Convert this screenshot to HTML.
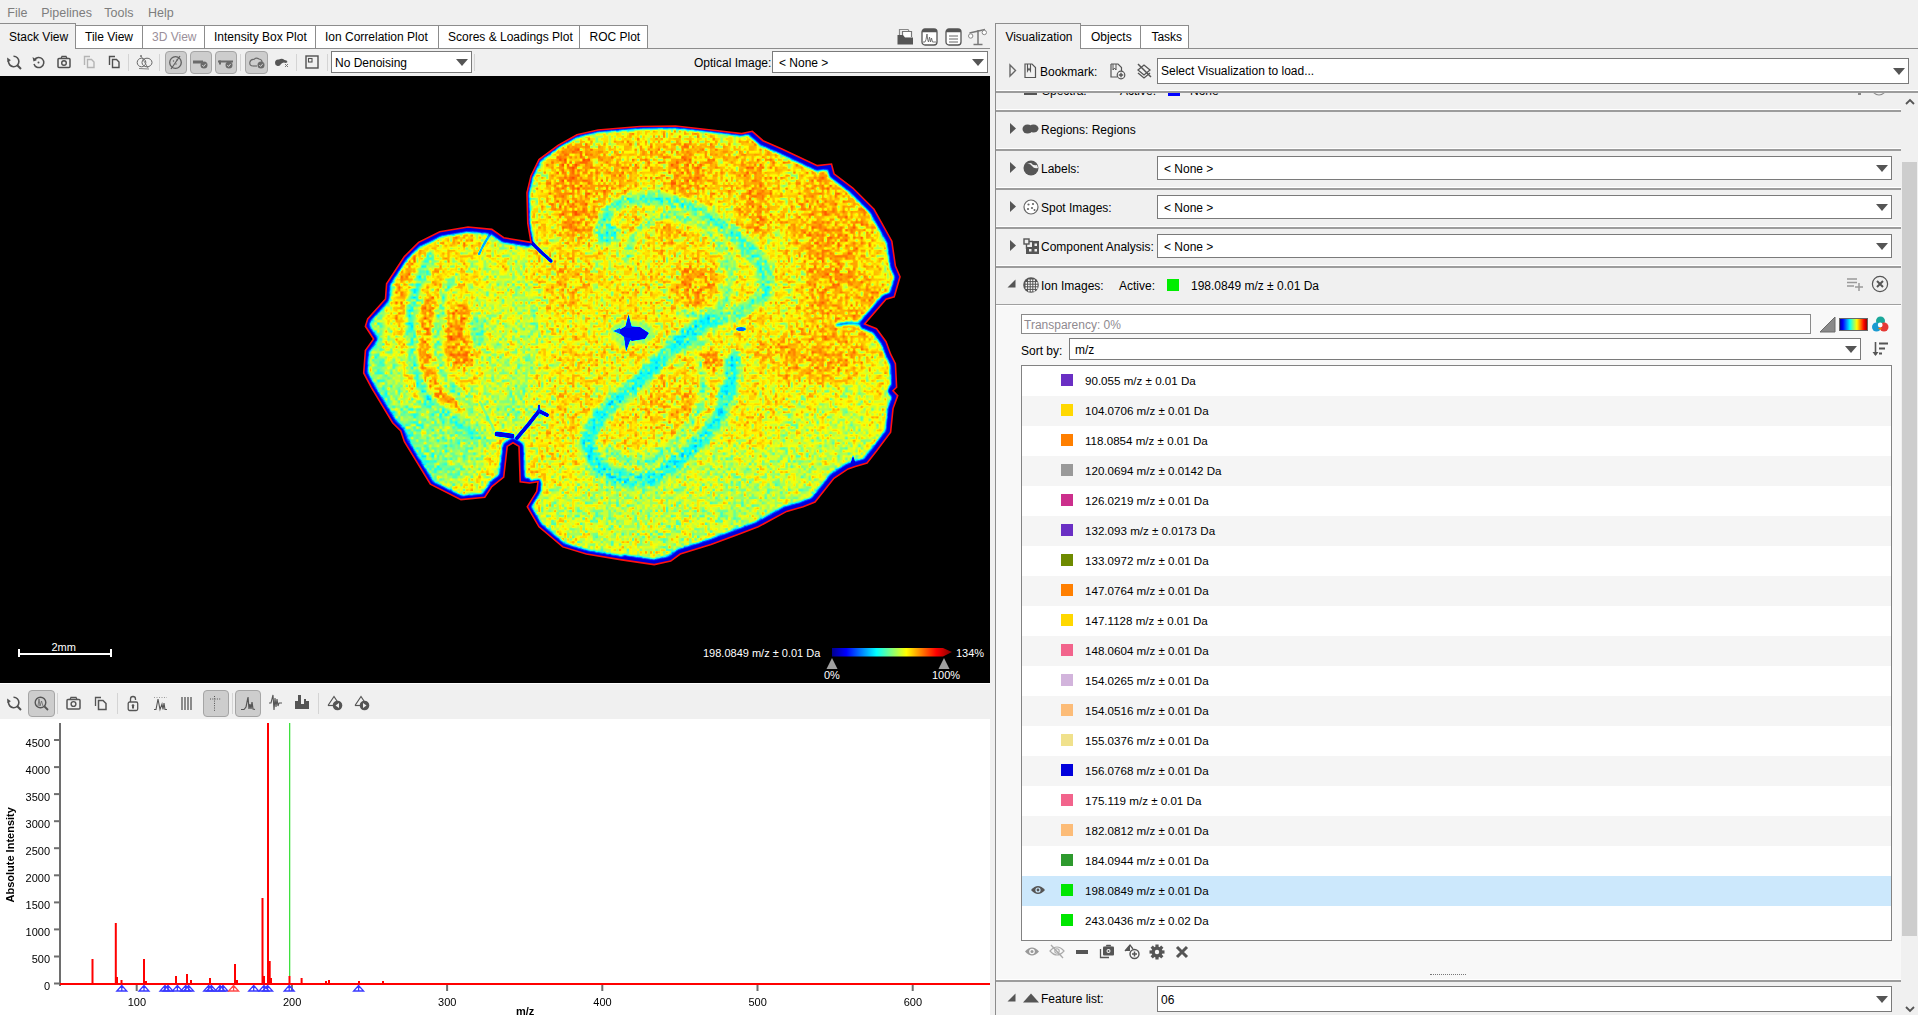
<!DOCTYPE html>
<html><head><meta charset="utf-8"><title>UI</title>
<style>
*{margin:0;padding:0;box-sizing:border-box}
html,body{width:1918px;height:1015px;overflow:hidden;background:#f0f0f0;font-family:"Liberation Sans",sans-serif;font-size:12px;color:#000}
.a{position:absolute}
.t{position:absolute;white-space:nowrap;line-height:1}
.tab{position:absolute;border:1px solid #8c8c8c;border-bottom:none;background:#fff}
.tabsel{background:#f0f0f0}
.combo{position:absolute;background:#fff;border:1px solid #7a7a7a}
.arr{position:absolute;width:0;height:0;border-left:6px solid transparent;border-right:6px solid transparent;border-top:7px solid #555}
.btnp{position:absolute;background:#cdcdcd;border:1px solid #a5a5a5;border-radius:4px}
.vsep{position:absolute;width:1px;background:#d6d6d6}
.sep{position:absolute;height:3px;border-top:1px solid #fff;background:#9c9c9c}
svg{position:absolute;overflow:visible}

</style></head><body>
<div class="t" style="left:7.30px;top:7.42px;font-size:12.5px;color:#7d7d7d;">File</div>
<div class="t" style="left:41.20px;top:7.42px;font-size:12.5px;color:#7d7d7d;">Pipelines</div>
<div class="t" style="left:104.30px;top:7.42px;font-size:12.5px;color:#7d7d7d;">Tools</div>
<div class="t" style="left:148.00px;top:7.42px;font-size:12.5px;color:#7d7d7d;">Help</div>
<div class="a" style="left:0px;top:48px;width:990px;height:1px;background:#8c8c8c;"></div>
<div class="tab tabsel" style="left:0px;top:23px;width:76px;height:26px;border-left:none"></div>
<div class="t" style="left:9.00px;top:30.84px;font-size:12px;">Stack View</div>
<div class="tab" style="left:75px;top:25px;width:68px;height:24px;border-bottom:1px solid #8c8c8c"></div>
<div class="t" style="left:85.00px;top:31.34px;font-size:12px;">Tile View</div>
<div class="tab" style="left:142px;top:25px;width:63px;height:24px;border-bottom:1px solid #8c8c8c"></div>
<div class="t" style="left:152.00px;top:31.34px;font-size:12px;color:#9a8f9a;">3D View</div>
<div class="tab" style="left:204px;top:25px;width:112px;height:24px;border-bottom:1px solid #8c8c8c"></div>
<div class="t" style="left:214.00px;top:31.34px;font-size:12px;">Intensity Box Plot</div>
<div class="tab" style="left:315px;top:25px;width:124px;height:24px;border-bottom:1px solid #8c8c8c"></div>
<div class="t" style="left:325.00px;top:31.34px;font-size:12px;">Ion Correlation Plot</div>
<div class="tab" style="left:438px;top:25px;width:142px;height:24px;border-bottom:1px solid #8c8c8c"></div>
<div class="t" style="left:448.00px;top:31.34px;font-size:12px;">Scores &amp; Loadings Plot</div>
<div class="tab" style="left:579px;top:25px;width:69px;height:24px;border-bottom:1px solid #8c8c8c"></div>
<div class="t" style="left:589.50px;top:31.34px;font-size:12px;">ROC Plot</div>
<svg style="left:7px;top:55px;" width="15" height="15" viewBox="0 0 15 15"><path d="M1.5 6 A5.2 5.2 0 1 0 6.5 1.3" fill="none" stroke="#505050" stroke-width="1.6"/><path d="M-0.4 6.3 L3.6 6.3 L1.3 2.2 Z" fill="#505050" transform="rotate(-25 1.5 5)"/><path d="M10.3 10.3 L14 14" stroke="#505050" stroke-width="2"/></svg>
<svg style="left:32px;top:56px;" width="13" height="13" viewBox="0 0 13 13"><path d="M2.5 4 A5 5 0 1 1 2 8" fill="none" stroke="#505050" stroke-width="1.5"/><path d="M0.5 1 L1.5 5.5 L5 4" fill="#505050"/><circle cx="6.5" cy="6.5" r="1" fill="#505050"/></svg>
<svg style="left:57px;top:55px;" width="14" height="14" viewBox="0 0 14 14"><rect x="1" y="3.5" width="12" height="9" rx="1" fill="none" stroke="#505050" stroke-width="1.5"/><path d="M4 3.5 L5 1.5 L9 1.5 L10 3.5" fill="none" stroke="#505050" stroke-width="1.3"/><circle cx="7" cy="8" r="2.3" fill="none" stroke="#505050" stroke-width="1.4"/></svg>
<svg style="left:83px;top:55px;" width="13" height="14" viewBox="0 0 13 14"><path d="M1.5 10 L1.5 1.5 L7 1.5" fill="none" stroke="#b4b4b4" stroke-width="1.4"/><path d="M4.5 4.5 L8.5 4.5 L11 7 L11 12.5 L4.5 12.5 Z" fill="none" stroke="#b4b4b4" stroke-width="1.4"/></svg>
<svg style="left:108px;top:55px;" width="13" height="14" viewBox="0 0 13 14"><path d="M1.5 10 L1.5 1.5 L7 1.5" fill="none" stroke="#505050" stroke-width="1.4"/><path d="M4.5 4.5 L8.5 4.5 L11 7 L11 12.5 L4.5 12.5 Z" fill="none" stroke="#505050" stroke-width="1.4"/></svg>
<div class="a" style="left:128px;top:54px;width:1px;height:17px;background:#d4d4d4;"></div>
<svg style="left:136px;top:54px;" width="17" height="17" viewBox="0 0 17 17"><circle cx="5.5" cy="8.5" r="4.3" fill="none" stroke="#666" stroke-width="1"/><ellipse cx="11" cy="8.5" rx="5" ry="4.3" fill="none" stroke="#666" stroke-width="1"/><path d="M5 2 L12 14 M3 14.5 L13 15" stroke="#777" stroke-width="0.9" fill="none"/><circle cx="5" cy="2" r="1" fill="#777"/></svg>
<div class="a" style="left:159px;top:54px;width:1px;height:17px;background:#d4d4d4;"></div>
<div class="btnp" style="left:164.5px;top:51px;width:22.0px;height:22.5px"></div>
<div class="btnp" style="left:189.5px;top:51px;width:22.0px;height:22.5px"></div>
<div class="btnp" style="left:214.5px;top:51px;width:22.0px;height:22.5px"></div>
<div class="btnp" style="left:245px;top:51px;width:22.5px;height:22.5px"></div>
<svg style="left:168px;top:55px;" width="15" height="15" viewBox="0 0 15 15"><circle cx="7.5" cy="7.5" r="5.8" fill="none" stroke="#606060" stroke-width="1.3"/><path d="M3 14 L12 1" stroke="#606060" stroke-width="1.2"/><circle cx="5.5" cy="6" r=".7" fill="#606060"/><circle cx="9" cy="5" r=".7" fill="#606060"/><circle cx="8" cy="9" r=".7" fill="#606060"/></svg>
<svg style="left:192px;top:56px;" width="17" height="14" viewBox="0 0 17 14"><rect x="1" y="4.5" width="10" height="3" fill="#6a6a6a"/><circle cx="12" cy="9" r="3.5" fill="#6a6a6a"/><path d="M10.3 9 L11.6 10.5 L13.8 7.8" stroke="#cdcdcd" stroke-width="1" fill="none"/></svg>
<svg style="left:217px;top:56px;" width="17" height="14" viewBox="0 0 17 14"><rect x="1" y="4.5" width="15" height="2" fill="#6a6a6a"/><rect x="2" y="4.5" width="2" height="4" fill="#6a6a6a"/><circle cx="12" cy="9" r="3.5" fill="#6a6a6a"/><path d="M10.3 9 L11.6 10.5 L13.8 7.8" stroke="#cdcdcd" stroke-width="1" fill="none"/></svg>
<div class="a" style="left:240px;top:54px;width:1px;height:17px;background:#d4d4d4;"></div>
<svg style="left:249px;top:56px;" width="16" height="14" viewBox="0 0 16 14"><path d="M4 10 Q0.5 10 0.8 6.5 Q1.5 3 5 3.5 Q7 1 10 3 Q13 3.5 13 6" fill="none" stroke="#6a6a6a" stroke-width="1.2"/><path d="M4 10 L8 10" stroke="#6a6a6a" stroke-width="1.2"/><circle cx="12" cy="9" r="3.5" fill="#6a6a6a"/><path d="M10.3 9 L11.6 10.5 L13.8 7.8" stroke="#cdcdcd" stroke-width="1" fill="none"/></svg>
<svg style="left:274px;top:57px;" width="15" height="11" viewBox="0 0 15 11"><path d="M1 6 Q1 2 5 2.5 Q8 1 10.5 3 Q13 3 13.5 5 L12 6 Q9 4.5 7 7 Q6 9.5 3.5 9 Q1 8.5 1 6Z" fill="#555"/><path d="M11 7 L14 10 M14 7 L11 10" stroke="#777" stroke-width="1"/></svg>
<div class="a" style="left:296px;top:54px;width:1px;height:17px;background:#d4d4d4;"></div>
<svg style="left:305px;top:55px;" width="14" height="14" viewBox="0 0 14 14"><rect x="1" y="1" width="12" height="12" fill="none" stroke="#505050" stroke-width="1.4"/><rect x="3.5" y="3.5" width="3.5" height="3.5" fill="none" stroke="#505050" stroke-width="1.1"/></svg>
<div class="a" style="left:327px;top:54px;width:1px;height:17px;background:#d4d4d4;"></div>
<div class="combo" style="left:331px;top:51px;width:141px;height:22px"></div>
<div class="t" style="left:335.00px;top:56.84px;font-size:12px;">No Denoising</div>
<div class="arr" style="left:456px;top:59px"></div>
<div class="a" style="left:474px;top:54px;width:1px;height:17px;background:#d4d4d4;"></div>
<div class="t" style="left:694.00px;top:57.34px;font-size:12px;">Optical Image:</div>
<div class="combo" style="left:772px;top:51px;width:216px;height:22px"></div>
<div class="t" style="left:779.00px;top:56.84px;font-size:12px;">&lt; None &gt;</div>
<div class="arr" style="left:972px;top:59px"></div>
<svg style="left:897px;top:28px;" width="17" height="18" viewBox="0 0 17 18"><path d="M2.5 8 L2.5 1.5 L11 1.5 L12 3" fill="none" stroke="#888" stroke-width="1.2"/><path d="M5.5 9 L5.5 3.5 L14.5 3.5 L14.5 9" fill="#fff" stroke="#777" stroke-width="1.2"/><path d="M0.5 16.5 L0.5 7 L6 7 L8 9.5 L16 9.5 L16 16.5 Z" fill="#555"/></svg>
<svg style="left:921px;top:28px;" width="17" height="18" viewBox="0 0 17 18"><rect x="1" y="1" width="15" height="16" rx="3" fill="#fff" stroke="#555" stroke-width="1.3"/><path d="M1 4.2 L1 4 Q1 1 4 1 L13 1 Q16 1 16 4 L16 4.2 Z" fill="#555"/><path d="M2 14 L4 14 Q5 13 6 6 Q6.5 13 7.5 14 L8.5 9 L9.5 14 L10.5 10 L11.5 14 L15 14" fill="none" stroke="#666" stroke-width="0.9"/></svg>
<svg style="left:945px;top:28px;" width="17" height="18" viewBox="0 0 17 18"><rect x="1" y="1" width="15" height="16" rx="3" fill="#fff" stroke="#555" stroke-width="1.3"/><path d="M1 4.2 L1 4 Q1 1 4 1 L13 1 Q16 1 16 4 L16 4.2 Z" fill="#555"/><path d="M4 8 L13 8 M4 11 L13 11 M4 14 L13 14" stroke="#666" stroke-width="1"/></svg>
<svg style="left:968px;top:28px;" width="20" height="18" viewBox="0 0 20 18"><path d="M10 2 L10 16 M5.5 16.5 L14.5 16.5 M1.5 5 L17 1.5" stroke="#777" stroke-width="1.5" fill="none"/><circle cx="2.7" cy="8" r="2.2" fill="#fff" stroke="#888" stroke-width="1"/><circle cx="16.3" cy="4.5" r="2.2" fill="#fff" stroke="#888" stroke-width="1"/></svg>
<div class="a" style="left:0px;top:76px;width:990px;height:607px;background:#000;"></div>
<div class="a" style="left:0px;top:683px;width:990px;height:1px;background:#fff;"></div>
<div class="a" style="left:18px;top:653px;width:94px;height:2px;background:#fff;"></div>
<div class="a" style="left:18px;top:649px;width:2px;height:8px;background:#fff;"></div>
<div class="a" style="left:110px;top:649px;width:2px;height:8px;background:#fff;"></div>
<div class="t" style="left:51.50px;top:641.69px;font-size:11px;color:#fff;">2mm</div>
<div class="t" style="left:703.00px;top:647.69px;font-size:11px;color:#fff;">198.0849 m/z ± 0.01 Da</div>
<svg style="left:830px;top:647px" width="125" height="30" viewBox="0 0 125 30"><defs><linearGradient id="jet" x1="0" x2="1" y1="0" y2="0"><stop offset="0" stop-color="#00008f"/><stop offset="0.12" stop-color="#0000ff"/><stop offset="0.37" stop-color="#00ffff"/><stop offset="0.62" stop-color="#ffff00"/><stop offset="0.87" stop-color="#ff0000"/><stop offset="1" stop-color="#800000"/></linearGradient></defs><path d="M2 1 L113 1 L122 5 L113 9.5 L2 9.5 Z" fill="url(#jet)"/><path d="M2 11 L-3.5 22 L7.5 22 Z" fill="#a0a0a0"/><path d="M114 11 L108.5 22 L119.5 22 Z" fill="#a0a0a0"/></svg>
<div class="t" style="left:956.00px;top:647.69px;font-size:11px;color:#fff;">134%</div>
<div class="t" style="left:824.00px;top:669.69px;font-size:11px;color:#fff;">0%</div>
<div class="t" style="left:932.00px;top:669.69px;font-size:11px;color:#fff;">100%</div>
<svg style="left:7px;top:696px;" width="15" height="15" viewBox="0 0 15 15"><path d="M1.5 6 A5.2 5.2 0 1 0 6.5 1.3" fill="none" stroke="#505050" stroke-width="1.6"/><path d="M-0.4 6.3 L3.6 6.3 L1.3 2.2 Z" fill="#505050" transform="rotate(-25 1.5 5)"/><path d="M10.3 10.3 L14 14" stroke="#505050" stroke-width="2"/></svg>
<div class="btnp" style="left:28px;top:690px;width:27px;height:27px"></div>
<svg style="left:34px;top:696px;" width="15" height="15" viewBox="0 0 15 15"><circle cx="6.5" cy="6.5" r="5.3" fill="none" stroke="#555" stroke-width="1.4"/><path d="M10.5 10.5 L14 14" stroke="#555" stroke-width="1.8"/><path d="M4 10 L5 3 L6 10 L7.5 5 L9 10" fill="none" stroke="#666" stroke-width=".8"/></svg>
<div class="a" style="left:57px;top:693px;width:1px;height:21px;background:#d4d4d4;"></div>
<svg style="left:66px;top:696px;" width="15" height="14" viewBox="0 0 15 14"><rect x="1" y="3.5" width="13" height="9.5" rx="1" fill="none" stroke="#555" stroke-width="1.5"/><path d="M4 3.5 L5 1.5 L10 1.5 L11 3.5" fill="none" stroke="#555" stroke-width="1.3"/><circle cx="7.5" cy="8" r="2.4" fill="none" stroke="#555" stroke-width="1.4"/></svg>
<svg style="left:94px;top:696px;" width="14" height="15" viewBox="0 0 14 15"><path d="M1.5 10 L1.5 1.5 L7 1.5" fill="none" stroke="#555" stroke-width="1.3"/><path d="M4.5 4.5 L9 4.5 L12 7.5 L12 13.5 L4.5 13.5 Z" fill="none" stroke="#555" stroke-width="1.5"/></svg>
<div class="a" style="left:117px;top:693px;width:1px;height:21px;background:#d4d4d4;"></div>
<svg style="left:127px;top:695px;" width="12" height="17" viewBox="0 0 12 17"><path d="M3.5 7 L3.5 4 A2.5 2.5 0 0 1 8.5 4 L8.5 5" fill="none" stroke="#555" stroke-width="1.3"/><rect x="1.2" y="7" width="9.5" height="8.5" rx="1.5" fill="none" stroke="#555" stroke-width="1.3"/><circle cx="6" cy="10.5" r="1.3" fill="#555"/><rect x="5" y="11" width="2" height="2.5" fill="#555"/></svg>
<svg style="left:153px;top:696px;" width="15" height="15" viewBox="0 0 15 15"><path d="M1 13.5 L3 13.5 L5 3 L7 13.5 L9 8 L10 13.5 L11 7 L12 13.5 L14 13.5" fill="none" stroke="#555" stroke-width="1.1"/><path d="M1 1.5 L14 1.5" stroke="#999" stroke-width="1" stroke-dasharray="1 1.5"/></svg>
<svg style="left:180px;top:696px;" width="14" height="15" viewBox="0 0 14 15"><path d="M2 1 L2 14 M5 1 L5 14 M8 1 L8 14 M11 1 L11 14" stroke="#555" stroke-width="1.3"/></svg>
<div class="btnp" style="left:203px;top:690px;width:26px;height:27px"></div>
<svg style="left:206px;top:695px;" width="20" height="17" viewBox="0 0 20 17"><path d="M4 4 L15 4 M8.5 1 L8.5 16" stroke="#555" stroke-width="1" stroke-dasharray="1 1.3"/></svg>
<div class="a" style="left:232px;top:693px;width:1px;height:21px;background:#d4d4d4;"></div>
<div class="btnp" style="left:235px;top:690px;width:26px;height:27px"></div>
<svg style="left:239px;top:695px;" width="18" height="17" viewBox="0 0 18 17"><path d="M2 14.5 L5 14.5 L7 12 L9 2 L10 14 L11 9 L12 14 L13 7 L14 14 L16 14.5" fill="none" stroke="#555" stroke-width="1.2"/></svg>
<svg style="left:268px;top:694px;" width="15" height="17" viewBox="0 0 15 17"><path d="M1 9 L3 9 L5 1 L6 16 L7 4 L8 13 L9 5 L10 12 L11 9 L14 9" fill="none" stroke="#555" stroke-width="1.1"/></svg>
<svg style="left:294px;top:694px;" width="17" height="16" viewBox="0 0 17 16"><path d="M1 15 L1 7 L4 7 L4 1 L7 1 L7 10 L10 10 L10 5 L12 5 L12 7 L15 7 L15 15 Z" fill="#555"/></svg>
<div class="a" style="left:318px;top:693px;width:1px;height:21px;background:#d4d4d4;"></div>
<svg style="left:327px;top:695px;" width="17" height="16" viewBox="0 0 17 16"><path d="M1 10.5 L7 1.5 L12 9" fill="none" stroke="#555" stroke-width="1.2"/><path d="M1 10.5 L7 10.5" stroke="#555" stroke-width="1.2"/><circle cx="10.5" cy="10.5" r="4.8" fill="#555"/><path d="M12 8 L8.5 10.5 L12 13 Z" fill="#f0f0f0"/></svg>
<svg style="left:354px;top:695px;" width="17" height="16" viewBox="0 0 17 16"><path d="M1 10.5 L7 1.5 L12 9" fill="none" stroke="#555" stroke-width="1.2"/><path d="M1 10.5 L7 10.5" stroke="#555" stroke-width="1.2"/><circle cx="10.5" cy="10.5" r="4.8" fill="#555"/><path d="M9 8 L12.5 10.5 L9 13 Z" fill="#f0f0f0"/></svg>
<svg style="left:0;top:76px" width="990" height="607" viewBox="0 76 990 607"><defs><clipPath id="bc"><path d="M527.0 192.7 L531.0 176.0 L539.0 159.6 L558.0 145.5 L577.0 134.8 L598.0 130.0 L640.0 126.5 L675.5 126.0 L711.0 130.0 L741.7 133.6 L752.3 131.3 L763.0 140.7 L781.9 149.0 L817.3 165.6 L831.5 164.0 L834.0 173.8 L852.8 188.0 L874.0 209.3 L891.8 241.2 L895.4 266.0 L900.0 276.7 L894.2 296.8 L886.0 299.2 L864.6 324.0 L876.5 328.7 L886.0 341.7 L890.6 354.2 L895.4 363.6 L896.6 387.3 L893.0 390.8 L897.7 395.6 L893.0 408.6 L890.6 432.2 L876.5 451.1 L867.0 463.0 L855.2 466.5 L848.0 468.9 L833.9 478.3 L815.0 502.0 L803.2 506.7 L786.6 511.4 L758.2 526.8 L739.3 533.9 L711.0 544.5 L680.2 554.0 L670.7 561.1 L654.2 564.6 L621.9 559.9 L586.4 554.0 L562.8 546.9 L539.0 526.8 L527.3 506.7 L536.8 491.3 L538.0 481.8 L529.7 483.0 L520.2 481.8 L519.0 446.4 L513.0 442.8 L507.2 446.4 L503.7 477.0 L491.8 486.6 L484.8 497.2 L461.0 499.6 L430.4 484.2 L404.4 441.7 L400.8 431.0 L392.6 422.7 L371.3 387.3 L363.7 373.0 L365.4 350.6 L373.6 339.0 L365.4 326.3 L367.7 319.0 L385.5 299.0 L386.6 283.8 L404.4 256.6 L418.6 242.4 L439.8 231.7 L468.0 227.0 L491.8 229.4 L503.7 237.7 L531.0 242.4 L527.8 223.5 Z"/></clipPath><filter id="b6" x="-50%" y="-50%" width="200%" height="200%"><feGaussianBlur stdDeviation="6"/></filter><filter id="b3" x="-50%" y="-50%" width="200%" height="200%"><feGaussianBlur stdDeviation="2.5"/></filter><filter id="b12" x="-50%" y="-50%" width="200%" height="200%"><feGaussianBlur stdDeviation="12"/></filter><filter id="b1" x="-50%" y="-50%" width="200%" height="200%"><feGaussianBlur stdDeviation="0.8"/></filter><filter id="jetmap" x="0" y="0" width="1" height="1" color-interpolation-filters="sRGB"><feComponentTransfer><feFuncR type="table" tableValues="0 0 0 0 0.5 1 1 1 0.5"/><feFuncG type="table" tableValues="0 0 0.5 1 1 1 0.5 0 0"/><feFuncB type="table" tableValues="0.5 1 1 1 0.5 0 0 0 0"/></feComponentTransfer></filter><pattern id="npat" x="0" y="0" width="124.8" height="124.8" patternUnits="userSpaceOnUse"><path d="M0.0 5.2h2.6v2.6h-2.6zM0.0 13.0h2.6v2.6h-2.6zM0.0 20.8h2.6v2.6h-2.6zM0.0 23.4h2.6v2.6h-2.6zM0.0 36.4h2.6v2.6h-2.6zM0.0 85.8h2.6v2.6h-2.6zM0.0 114.4h2.6v2.6h-2.6zM0.0 119.6h2.6v2.6h-2.6zM2.6 0.0h2.6v2.6h-2.6zM2.6 10.4h2.6v2.6h-2.6zM2.6 20.8h2.6v2.6h-2.6zM2.6 23.4h2.6v2.6h-2.6zM2.6 46.8h2.6v2.6h-2.6zM2.6 65.0h2.6v2.6h-2.6zM2.6 78.0h2.6v2.6h-2.6zM2.6 88.4h2.6v2.6h-2.6zM2.6 93.6h2.6v2.6h-2.6zM2.6 98.8h2.6v2.6h-2.6zM2.6 101.4h2.6v2.6h-2.6zM5.2 2.6h2.6v2.6h-2.6zM5.2 20.8h2.6v2.6h-2.6zM5.2 28.6h2.6v2.6h-2.6zM5.2 49.4h2.6v2.6h-2.6zM5.2 52.0h2.6v2.6h-2.6zM5.2 59.8h2.6v2.6h-2.6zM5.2 62.4h2.6v2.6h-2.6zM5.2 85.8h2.6v2.6h-2.6zM5.2 106.6h2.6v2.6h-2.6zM7.8 28.6h2.6v2.6h-2.6zM7.8 41.6h2.6v2.6h-2.6zM7.8 44.2h2.6v2.6h-2.6zM7.8 54.6h2.6v2.6h-2.6zM7.8 70.2h2.6v2.6h-2.6zM7.8 83.2h2.6v2.6h-2.6zM7.8 85.8h2.6v2.6h-2.6zM7.8 88.4h2.6v2.6h-2.6zM7.8 106.6h2.6v2.6h-2.6zM7.8 117.0h2.6v2.6h-2.6zM10.4 46.8h2.6v2.6h-2.6zM10.4 52.0h2.6v2.6h-2.6zM10.4 65.0h2.6v2.6h-2.6zM10.4 70.2h2.6v2.6h-2.6zM10.4 72.8h2.6v2.6h-2.6zM10.4 83.2h2.6v2.6h-2.6zM10.4 109.2h2.6v2.6h-2.6zM10.4 119.6h2.6v2.6h-2.6zM13.0 5.2h2.6v2.6h-2.6zM13.0 7.8h2.6v2.6h-2.6zM13.0 49.4h2.6v2.6h-2.6zM13.0 57.2h2.6v2.6h-2.6zM13.0 59.8h2.6v2.6h-2.6zM13.0 67.6h2.6v2.6h-2.6zM13.0 83.2h2.6v2.6h-2.6zM13.0 96.2h2.6v2.6h-2.6zM13.0 104.0h2.6v2.6h-2.6zM13.0 122.2h2.6v2.6h-2.6zM15.6 28.6h2.6v2.6h-2.6zM15.6 46.8h2.6v2.6h-2.6zM15.6 67.6h2.6v2.6h-2.6zM15.6 75.4h2.6v2.6h-2.6zM15.6 85.8h2.6v2.6h-2.6zM15.6 91.0h2.6v2.6h-2.6zM15.6 93.6h2.6v2.6h-2.6zM15.6 96.2h2.6v2.6h-2.6zM15.6 114.4h2.6v2.6h-2.6zM18.2 2.6h2.6v2.6h-2.6zM18.2 10.4h2.6v2.6h-2.6zM18.2 23.4h2.6v2.6h-2.6zM18.2 57.2h2.6v2.6h-2.6zM18.2 67.6h2.6v2.6h-2.6zM18.2 72.8h2.6v2.6h-2.6zM18.2 78.0h2.6v2.6h-2.6zM18.2 80.6h2.6v2.6h-2.6zM18.2 85.8h2.6v2.6h-2.6zM18.2 101.4h2.6v2.6h-2.6zM18.2 119.6h2.6v2.6h-2.6zM20.8 5.2h2.6v2.6h-2.6zM20.8 7.8h2.6v2.6h-2.6zM20.8 18.2h2.6v2.6h-2.6zM20.8 26.0h2.6v2.6h-2.6zM20.8 28.6h2.6v2.6h-2.6zM20.8 70.2h2.6v2.6h-2.6zM20.8 101.4h2.6v2.6h-2.6zM20.8 106.6h2.6v2.6h-2.6zM20.8 109.2h2.6v2.6h-2.6zM23.4 0.0h2.6v2.6h-2.6zM23.4 5.2h2.6v2.6h-2.6zM23.4 33.8h2.6v2.6h-2.6zM23.4 75.4h2.6v2.6h-2.6zM23.4 91.0h2.6v2.6h-2.6zM23.4 93.6h2.6v2.6h-2.6zM23.4 104.0h2.6v2.6h-2.6zM23.4 117.0h2.6v2.6h-2.6zM26.0 31.2h2.6v2.6h-2.6zM26.0 57.2h2.6v2.6h-2.6zM26.0 62.4h2.6v2.6h-2.6zM26.0 96.2h2.6v2.6h-2.6zM28.6 15.6h2.6v2.6h-2.6zM28.6 28.6h2.6v2.6h-2.6zM28.6 33.8h2.6v2.6h-2.6zM28.6 44.2h2.6v2.6h-2.6zM28.6 46.8h2.6v2.6h-2.6zM28.6 57.2h2.6v2.6h-2.6zM28.6 70.2h2.6v2.6h-2.6zM28.6 75.4h2.6v2.6h-2.6zM28.6 80.6h2.6v2.6h-2.6zM28.6 88.4h2.6v2.6h-2.6zM28.6 101.4h2.6v2.6h-2.6zM28.6 122.2h2.6v2.6h-2.6zM31.2 5.2h2.6v2.6h-2.6zM31.2 18.2h2.6v2.6h-2.6zM31.2 23.4h2.6v2.6h-2.6zM31.2 28.6h2.6v2.6h-2.6zM31.2 44.2h2.6v2.6h-2.6zM31.2 75.4h2.6v2.6h-2.6zM31.2 85.8h2.6v2.6h-2.6zM31.2 98.8h2.6v2.6h-2.6zM33.8 0.0h2.6v2.6h-2.6zM33.8 20.8h2.6v2.6h-2.6zM33.8 28.6h2.6v2.6h-2.6zM33.8 31.2h2.6v2.6h-2.6zM33.8 41.6h2.6v2.6h-2.6zM33.8 83.2h2.6v2.6h-2.6zM33.8 85.8h2.6v2.6h-2.6zM33.8 98.8h2.6v2.6h-2.6zM33.8 111.8h2.6v2.6h-2.6zM36.4 5.2h2.6v2.6h-2.6zM36.4 31.2h2.6v2.6h-2.6zM36.4 54.6h2.6v2.6h-2.6zM36.4 83.2h2.6v2.6h-2.6zM36.4 85.8h2.6v2.6h-2.6zM36.4 104.0h2.6v2.6h-2.6zM36.4 109.2h2.6v2.6h-2.6zM36.4 111.8h2.6v2.6h-2.6zM36.4 119.6h2.6v2.6h-2.6zM39.0 18.2h2.6v2.6h-2.6zM39.0 70.2h2.6v2.6h-2.6zM39.0 72.8h2.6v2.6h-2.6zM39.0 75.4h2.6v2.6h-2.6zM39.0 78.0h2.6v2.6h-2.6zM39.0 93.6h2.6v2.6h-2.6zM39.0 96.2h2.6v2.6h-2.6zM39.0 104.0h2.6v2.6h-2.6zM39.0 119.6h2.6v2.6h-2.6zM41.6 15.6h2.6v2.6h-2.6zM41.6 20.8h2.6v2.6h-2.6zM41.6 70.2h2.6v2.6h-2.6zM41.6 93.6h2.6v2.6h-2.6zM41.6 101.4h2.6v2.6h-2.6zM41.6 104.0h2.6v2.6h-2.6zM41.6 106.6h2.6v2.6h-2.6zM41.6 111.8h2.6v2.6h-2.6zM41.6 117.0h2.6v2.6h-2.6zM44.2 0.0h2.6v2.6h-2.6zM44.2 2.6h2.6v2.6h-2.6zM44.2 15.6h2.6v2.6h-2.6zM44.2 70.2h2.6v2.6h-2.6zM44.2 80.6h2.6v2.6h-2.6zM44.2 88.4h2.6v2.6h-2.6zM44.2 93.6h2.6v2.6h-2.6zM44.2 106.6h2.6v2.6h-2.6zM46.8 18.2h2.6v2.6h-2.6zM46.8 23.4h2.6v2.6h-2.6zM46.8 62.4h2.6v2.6h-2.6zM46.8 70.2h2.6v2.6h-2.6zM46.8 88.4h2.6v2.6h-2.6zM46.8 91.0h2.6v2.6h-2.6zM46.8 106.6h2.6v2.6h-2.6zM49.4 13.0h2.6v2.6h-2.6zM49.4 39.0h2.6v2.6h-2.6zM49.4 41.6h2.6v2.6h-2.6zM49.4 49.4h2.6v2.6h-2.6zM49.4 52.0h2.6v2.6h-2.6zM49.4 54.6h2.6v2.6h-2.6zM49.4 62.4h2.6v2.6h-2.6zM49.4 109.2h2.6v2.6h-2.6zM49.4 111.8h2.6v2.6h-2.6zM49.4 117.0h2.6v2.6h-2.6zM52.0 0.0h2.6v2.6h-2.6zM52.0 13.0h2.6v2.6h-2.6zM52.0 18.2h2.6v2.6h-2.6zM52.0 33.8h2.6v2.6h-2.6zM52.0 39.0h2.6v2.6h-2.6zM52.0 44.2h2.6v2.6h-2.6zM52.0 52.0h2.6v2.6h-2.6zM52.0 93.6h2.6v2.6h-2.6zM52.0 106.6h2.6v2.6h-2.6zM52.0 109.2h2.6v2.6h-2.6zM52.0 122.2h2.6v2.6h-2.6zM54.6 13.0h2.6v2.6h-2.6zM54.6 65.0h2.6v2.6h-2.6zM54.6 72.8h2.6v2.6h-2.6zM54.6 96.2h2.6v2.6h-2.6zM54.6 104.0h2.6v2.6h-2.6zM54.6 119.6h2.6v2.6h-2.6zM57.2 26.0h2.6v2.6h-2.6zM57.2 33.8h2.6v2.6h-2.6zM57.2 65.0h2.6v2.6h-2.6zM57.2 93.6h2.6v2.6h-2.6zM57.2 98.8h2.6v2.6h-2.6zM59.8 0.0h2.6v2.6h-2.6zM59.8 2.6h2.6v2.6h-2.6zM59.8 28.6h2.6v2.6h-2.6zM59.8 39.0h2.6v2.6h-2.6zM59.8 41.6h2.6v2.6h-2.6zM59.8 52.0h2.6v2.6h-2.6zM59.8 54.6h2.6v2.6h-2.6zM59.8 67.6h2.6v2.6h-2.6zM59.8 70.2h2.6v2.6h-2.6zM59.8 83.2h2.6v2.6h-2.6zM59.8 117.0h2.6v2.6h-2.6zM59.8 119.6h2.6v2.6h-2.6zM62.4 0.0h2.6v2.6h-2.6zM62.4 7.8h2.6v2.6h-2.6zM62.4 13.0h2.6v2.6h-2.6zM62.4 31.2h2.6v2.6h-2.6zM62.4 33.8h2.6v2.6h-2.6zM62.4 57.2h2.6v2.6h-2.6zM62.4 75.4h2.6v2.6h-2.6zM62.4 85.8h2.6v2.6h-2.6zM62.4 96.2h2.6v2.6h-2.6zM62.4 104.0h2.6v2.6h-2.6zM62.4 109.2h2.6v2.6h-2.6zM62.4 111.8h2.6v2.6h-2.6zM65.0 5.2h2.6v2.6h-2.6zM65.0 10.4h2.6v2.6h-2.6zM65.0 13.0h2.6v2.6h-2.6zM65.0 23.4h2.6v2.6h-2.6zM65.0 26.0h2.6v2.6h-2.6zM65.0 46.8h2.6v2.6h-2.6zM65.0 49.4h2.6v2.6h-2.6zM65.0 67.6h2.6v2.6h-2.6zM65.0 80.6h2.6v2.6h-2.6zM65.0 83.2h2.6v2.6h-2.6zM65.0 85.8h2.6v2.6h-2.6zM65.0 106.6h2.6v2.6h-2.6zM65.0 111.8h2.6v2.6h-2.6zM67.6 5.2h2.6v2.6h-2.6zM67.6 28.6h2.6v2.6h-2.6zM67.6 41.6h2.6v2.6h-2.6zM67.6 67.6h2.6v2.6h-2.6zM67.6 93.6h2.6v2.6h-2.6zM67.6 96.2h2.6v2.6h-2.6zM67.6 98.8h2.6v2.6h-2.6zM67.6 101.4h2.6v2.6h-2.6zM67.6 106.6h2.6v2.6h-2.6zM70.2 18.2h2.6v2.6h-2.6zM70.2 23.4h2.6v2.6h-2.6zM70.2 31.2h2.6v2.6h-2.6zM70.2 44.2h2.6v2.6h-2.6zM70.2 46.8h2.6v2.6h-2.6zM70.2 49.4h2.6v2.6h-2.6zM70.2 57.2h2.6v2.6h-2.6zM70.2 59.8h2.6v2.6h-2.6zM70.2 104.0h2.6v2.6h-2.6zM70.2 109.2h2.6v2.6h-2.6zM70.2 111.8h2.6v2.6h-2.6zM70.2 114.4h2.6v2.6h-2.6zM72.8 15.6h2.6v2.6h-2.6zM72.8 20.8h2.6v2.6h-2.6zM72.8 49.4h2.6v2.6h-2.6zM72.8 65.0h2.6v2.6h-2.6zM72.8 67.6h2.6v2.6h-2.6zM72.8 72.8h2.6v2.6h-2.6zM72.8 80.6h2.6v2.6h-2.6zM72.8 88.4h2.6v2.6h-2.6zM72.8 101.4h2.6v2.6h-2.6zM72.8 104.0h2.6v2.6h-2.6zM72.8 106.6h2.6v2.6h-2.6zM72.8 111.8h2.6v2.6h-2.6zM75.4 18.2h2.6v2.6h-2.6zM75.4 20.8h2.6v2.6h-2.6zM75.4 26.0h2.6v2.6h-2.6zM75.4 41.6h2.6v2.6h-2.6zM75.4 49.4h2.6v2.6h-2.6zM75.4 52.0h2.6v2.6h-2.6zM75.4 54.6h2.6v2.6h-2.6zM75.4 57.2h2.6v2.6h-2.6zM75.4 62.4h2.6v2.6h-2.6zM75.4 80.6h2.6v2.6h-2.6zM75.4 101.4h2.6v2.6h-2.6zM78.0 5.2h2.6v2.6h-2.6zM78.0 18.2h2.6v2.6h-2.6zM78.0 36.4h2.6v2.6h-2.6zM78.0 39.0h2.6v2.6h-2.6zM78.0 65.0h2.6v2.6h-2.6zM78.0 106.6h2.6v2.6h-2.6zM78.0 119.6h2.6v2.6h-2.6zM80.6 15.6h2.6v2.6h-2.6zM80.6 18.2h2.6v2.6h-2.6zM80.6 20.8h2.6v2.6h-2.6zM80.6 52.0h2.6v2.6h-2.6zM80.6 78.0h2.6v2.6h-2.6zM80.6 85.8h2.6v2.6h-2.6zM80.6 93.6h2.6v2.6h-2.6zM80.6 104.0h2.6v2.6h-2.6zM80.6 106.6h2.6v2.6h-2.6zM83.2 2.6h2.6v2.6h-2.6zM83.2 5.2h2.6v2.6h-2.6zM83.2 15.6h2.6v2.6h-2.6zM83.2 20.8h2.6v2.6h-2.6zM83.2 46.8h2.6v2.6h-2.6zM83.2 62.4h2.6v2.6h-2.6zM83.2 75.4h2.6v2.6h-2.6zM83.2 78.0h2.6v2.6h-2.6zM83.2 93.6h2.6v2.6h-2.6zM83.2 101.4h2.6v2.6h-2.6zM83.2 109.2h2.6v2.6h-2.6zM83.2 111.8h2.6v2.6h-2.6zM83.2 122.2h2.6v2.6h-2.6zM85.8 7.8h2.6v2.6h-2.6zM85.8 23.4h2.6v2.6h-2.6zM85.8 26.0h2.6v2.6h-2.6zM85.8 39.0h2.6v2.6h-2.6zM85.8 44.2h2.6v2.6h-2.6zM85.8 46.8h2.6v2.6h-2.6zM85.8 83.2h2.6v2.6h-2.6zM85.8 85.8h2.6v2.6h-2.6zM85.8 88.4h2.6v2.6h-2.6zM85.8 96.2h2.6v2.6h-2.6zM85.8 104.0h2.6v2.6h-2.6zM85.8 114.4h2.6v2.6h-2.6zM88.4 10.4h2.6v2.6h-2.6zM88.4 26.0h2.6v2.6h-2.6zM88.4 28.6h2.6v2.6h-2.6zM88.4 49.4h2.6v2.6h-2.6zM88.4 54.6h2.6v2.6h-2.6zM88.4 62.4h2.6v2.6h-2.6zM88.4 88.4h2.6v2.6h-2.6zM88.4 122.2h2.6v2.6h-2.6zM91.0 18.2h2.6v2.6h-2.6zM91.0 39.0h2.6v2.6h-2.6zM91.0 46.8h2.6v2.6h-2.6zM91.0 49.4h2.6v2.6h-2.6zM91.0 57.2h2.6v2.6h-2.6zM91.0 91.0h2.6v2.6h-2.6zM91.0 93.6h2.6v2.6h-2.6zM91.0 106.6h2.6v2.6h-2.6zM91.0 119.6h2.6v2.6h-2.6zM93.6 31.2h2.6v2.6h-2.6zM93.6 41.6h2.6v2.6h-2.6zM93.6 70.2h2.6v2.6h-2.6zM93.6 80.6h2.6v2.6h-2.6zM93.6 83.2h2.6v2.6h-2.6zM93.6 91.0h2.6v2.6h-2.6zM93.6 96.2h2.6v2.6h-2.6zM93.6 111.8h2.6v2.6h-2.6zM93.6 114.4h2.6v2.6h-2.6zM96.2 26.0h2.6v2.6h-2.6zM96.2 28.6h2.6v2.6h-2.6zM96.2 44.2h2.6v2.6h-2.6zM96.2 52.0h2.6v2.6h-2.6zM96.2 75.4h2.6v2.6h-2.6zM96.2 111.8h2.6v2.6h-2.6zM98.8 0.0h2.6v2.6h-2.6zM98.8 7.8h2.6v2.6h-2.6zM98.8 23.4h2.6v2.6h-2.6zM98.8 33.8h2.6v2.6h-2.6zM98.8 46.8h2.6v2.6h-2.6zM98.8 59.8h2.6v2.6h-2.6zM98.8 75.4h2.6v2.6h-2.6zM98.8 98.8h2.6v2.6h-2.6zM101.4 20.8h2.6v2.6h-2.6zM101.4 23.4h2.6v2.6h-2.6zM101.4 31.2h2.6v2.6h-2.6zM101.4 39.0h2.6v2.6h-2.6zM101.4 44.2h2.6v2.6h-2.6zM101.4 65.0h2.6v2.6h-2.6zM101.4 80.6h2.6v2.6h-2.6zM101.4 85.8h2.6v2.6h-2.6zM101.4 91.0h2.6v2.6h-2.6zM101.4 96.2h2.6v2.6h-2.6zM101.4 101.4h2.6v2.6h-2.6zM104.0 5.2h2.6v2.6h-2.6zM104.0 7.8h2.6v2.6h-2.6zM104.0 31.2h2.6v2.6h-2.6zM104.0 57.2h2.6v2.6h-2.6zM104.0 59.8h2.6v2.6h-2.6zM104.0 70.2h2.6v2.6h-2.6zM104.0 72.8h2.6v2.6h-2.6zM104.0 78.0h2.6v2.6h-2.6zM104.0 96.2h2.6v2.6h-2.6zM104.0 104.0h2.6v2.6h-2.6zM104.0 106.6h2.6v2.6h-2.6zM104.0 119.6h2.6v2.6h-2.6zM104.0 122.2h2.6v2.6h-2.6zM106.6 0.0h2.6v2.6h-2.6zM106.6 26.0h2.6v2.6h-2.6zM106.6 44.2h2.6v2.6h-2.6zM106.6 46.8h2.6v2.6h-2.6zM106.6 52.0h2.6v2.6h-2.6zM106.6 54.6h2.6v2.6h-2.6zM106.6 65.0h2.6v2.6h-2.6zM106.6 93.6h2.6v2.6h-2.6zM109.2 20.8h2.6v2.6h-2.6zM109.2 23.4h2.6v2.6h-2.6zM109.2 31.2h2.6v2.6h-2.6zM109.2 33.8h2.6v2.6h-2.6zM109.2 39.0h2.6v2.6h-2.6zM109.2 65.0h2.6v2.6h-2.6zM109.2 72.8h2.6v2.6h-2.6zM109.2 78.0h2.6v2.6h-2.6zM109.2 96.2h2.6v2.6h-2.6zM109.2 106.6h2.6v2.6h-2.6zM111.8 0.0h2.6v2.6h-2.6zM111.8 23.4h2.6v2.6h-2.6zM111.8 49.4h2.6v2.6h-2.6zM111.8 54.6h2.6v2.6h-2.6zM111.8 67.6h2.6v2.6h-2.6zM111.8 75.4h2.6v2.6h-2.6zM111.8 80.6h2.6v2.6h-2.6zM111.8 85.8h2.6v2.6h-2.6zM111.8 93.6h2.6v2.6h-2.6zM114.4 0.0h2.6v2.6h-2.6zM114.4 20.8h2.6v2.6h-2.6zM114.4 44.2h2.6v2.6h-2.6zM114.4 57.2h2.6v2.6h-2.6zM114.4 62.4h2.6v2.6h-2.6zM114.4 78.0h2.6v2.6h-2.6zM114.4 98.8h2.6v2.6h-2.6zM114.4 117.0h2.6v2.6h-2.6zM117.0 7.8h2.6v2.6h-2.6zM117.0 15.6h2.6v2.6h-2.6zM117.0 18.2h2.6v2.6h-2.6zM117.0 26.0h2.6v2.6h-2.6zM117.0 33.8h2.6v2.6h-2.6zM117.0 44.2h2.6v2.6h-2.6zM117.0 46.8h2.6v2.6h-2.6zM117.0 67.6h2.6v2.6h-2.6zM117.0 72.8h2.6v2.6h-2.6zM117.0 80.6h2.6v2.6h-2.6zM117.0 101.4h2.6v2.6h-2.6zM117.0 109.2h2.6v2.6h-2.6zM117.0 111.8h2.6v2.6h-2.6zM119.6 0.0h2.6v2.6h-2.6zM119.6 15.6h2.6v2.6h-2.6zM119.6 33.8h2.6v2.6h-2.6zM119.6 39.0h2.6v2.6h-2.6zM119.6 54.6h2.6v2.6h-2.6zM119.6 57.2h2.6v2.6h-2.6zM119.6 67.6h2.6v2.6h-2.6zM119.6 70.2h2.6v2.6h-2.6zM119.6 72.8h2.6v2.6h-2.6zM119.6 109.2h2.6v2.6h-2.6zM122.2 10.4h2.6v2.6h-2.6zM122.2 26.0h2.6v2.6h-2.6zM122.2 52.0h2.6v2.6h-2.6zM122.2 59.8h2.6v2.6h-2.6zM122.2 75.4h2.6v2.6h-2.6zM122.2 78.0h2.6v2.6h-2.6zM122.2 80.6h2.6v2.6h-2.6zM122.2 85.8h2.6v2.6h-2.6zM122.2 122.2h2.6v2.6h-2.6z" fill="#fff" fill-opacity="0.08"/><path d="M0.0 41.6h2.6v2.6h-2.6zM0.0 78.0h2.6v2.6h-2.6zM0.0 91.0h2.6v2.6h-2.6zM0.0 101.4h2.6v2.6h-2.6zM2.6 2.6h2.6v2.6h-2.6zM2.6 54.6h2.6v2.6h-2.6zM2.6 62.4h2.6v2.6h-2.6zM2.6 70.2h2.6v2.6h-2.6zM2.6 75.4h2.6v2.6h-2.6zM5.2 0.0h2.6v2.6h-2.6zM5.2 7.8h2.6v2.6h-2.6zM5.2 10.4h2.6v2.6h-2.6zM5.2 39.0h2.6v2.6h-2.6zM5.2 46.8h2.6v2.6h-2.6zM5.2 54.6h2.6v2.6h-2.6zM5.2 70.2h2.6v2.6h-2.6zM5.2 101.4h2.6v2.6h-2.6zM7.8 67.6h2.6v2.6h-2.6zM7.8 91.0h2.6v2.6h-2.6zM7.8 104.0h2.6v2.6h-2.6zM10.4 23.4h2.6v2.6h-2.6zM10.4 41.6h2.6v2.6h-2.6zM10.4 44.2h2.6v2.6h-2.6zM10.4 57.2h2.6v2.6h-2.6zM10.4 67.6h2.6v2.6h-2.6zM10.4 85.8h2.6v2.6h-2.6zM10.4 98.8h2.6v2.6h-2.6zM10.4 104.0h2.6v2.6h-2.6zM10.4 111.8h2.6v2.6h-2.6zM13.0 18.2h2.6v2.6h-2.6zM13.0 31.2h2.6v2.6h-2.6zM13.0 65.0h2.6v2.6h-2.6zM13.0 70.2h2.6v2.6h-2.6zM13.0 72.8h2.6v2.6h-2.6zM13.0 98.8h2.6v2.6h-2.6zM13.0 106.6h2.6v2.6h-2.6zM13.0 109.2h2.6v2.6h-2.6zM13.0 117.0h2.6v2.6h-2.6zM15.6 20.8h2.6v2.6h-2.6zM15.6 23.4h2.6v2.6h-2.6zM15.6 33.8h2.6v2.6h-2.6zM15.6 52.0h2.6v2.6h-2.6zM15.6 62.4h2.6v2.6h-2.6zM15.6 106.6h2.6v2.6h-2.6zM18.2 26.0h2.6v2.6h-2.6zM18.2 28.6h2.6v2.6h-2.6zM18.2 33.8h2.6v2.6h-2.6zM18.2 83.2h2.6v2.6h-2.6zM18.2 98.8h2.6v2.6h-2.6zM18.2 104.0h2.6v2.6h-2.6zM20.8 15.6h2.6v2.6h-2.6zM20.8 65.0h2.6v2.6h-2.6zM23.4 23.4h2.6v2.6h-2.6zM23.4 39.0h2.6v2.6h-2.6zM23.4 62.4h2.6v2.6h-2.6zM23.4 111.8h2.6v2.6h-2.6zM23.4 119.6h2.6v2.6h-2.6zM26.0 18.2h2.6v2.6h-2.6zM26.0 28.6h2.6v2.6h-2.6zM26.0 41.6h2.6v2.6h-2.6zM26.0 44.2h2.6v2.6h-2.6zM26.0 101.4h2.6v2.6h-2.6zM28.6 0.0h2.6v2.6h-2.6zM28.6 5.2h2.6v2.6h-2.6zM28.6 10.4h2.6v2.6h-2.6zM28.6 54.6h2.6v2.6h-2.6zM28.6 59.8h2.6v2.6h-2.6zM28.6 62.4h2.6v2.6h-2.6zM31.2 0.0h2.6v2.6h-2.6zM31.2 13.0h2.6v2.6h-2.6zM31.2 26.0h2.6v2.6h-2.6zM31.2 67.6h2.6v2.6h-2.6zM31.2 70.2h2.6v2.6h-2.6zM31.2 91.0h2.6v2.6h-2.6zM31.2 104.0h2.6v2.6h-2.6zM33.8 2.6h2.6v2.6h-2.6zM33.8 10.4h2.6v2.6h-2.6zM33.8 15.6h2.6v2.6h-2.6zM33.8 52.0h2.6v2.6h-2.6zM33.8 88.4h2.6v2.6h-2.6zM33.8 91.0h2.6v2.6h-2.6zM33.8 96.2h2.6v2.6h-2.6zM36.4 13.0h2.6v2.6h-2.6zM36.4 28.6h2.6v2.6h-2.6zM36.4 36.4h2.6v2.6h-2.6zM36.4 49.4h2.6v2.6h-2.6zM36.4 106.6h2.6v2.6h-2.6zM36.4 114.4h2.6v2.6h-2.6zM39.0 0.0h2.6v2.6h-2.6zM39.0 5.2h2.6v2.6h-2.6zM39.0 20.8h2.6v2.6h-2.6zM39.0 26.0h2.6v2.6h-2.6zM39.0 36.4h2.6v2.6h-2.6zM39.0 44.2h2.6v2.6h-2.6zM39.0 49.4h2.6v2.6h-2.6zM39.0 57.2h2.6v2.6h-2.6zM39.0 88.4h2.6v2.6h-2.6zM41.6 31.2h2.6v2.6h-2.6zM41.6 52.0h2.6v2.6h-2.6zM41.6 65.0h2.6v2.6h-2.6zM41.6 75.4h2.6v2.6h-2.6zM41.6 83.2h2.6v2.6h-2.6zM41.6 98.8h2.6v2.6h-2.6zM44.2 31.2h2.6v2.6h-2.6zM44.2 98.8h2.6v2.6h-2.6zM44.2 101.4h2.6v2.6h-2.6zM44.2 104.0h2.6v2.6h-2.6zM44.2 109.2h2.6v2.6h-2.6zM44.2 117.0h2.6v2.6h-2.6zM46.8 7.8h2.6v2.6h-2.6zM46.8 26.0h2.6v2.6h-2.6zM46.8 54.6h2.6v2.6h-2.6zM46.8 59.8h2.6v2.6h-2.6zM46.8 72.8h2.6v2.6h-2.6zM46.8 75.4h2.6v2.6h-2.6zM46.8 114.4h2.6v2.6h-2.6zM49.4 2.6h2.6v2.6h-2.6zM49.4 18.2h2.6v2.6h-2.6zM52.0 15.6h2.6v2.6h-2.6zM52.0 26.0h2.6v2.6h-2.6zM52.0 41.6h2.6v2.6h-2.6zM52.0 49.4h2.6v2.6h-2.6zM52.0 80.6h2.6v2.6h-2.6zM52.0 83.2h2.6v2.6h-2.6zM52.0 104.0h2.6v2.6h-2.6zM54.6 5.2h2.6v2.6h-2.6zM54.6 18.2h2.6v2.6h-2.6zM54.6 59.8h2.6v2.6h-2.6zM54.6 70.2h2.6v2.6h-2.6zM54.6 83.2h2.6v2.6h-2.6zM57.2 20.8h2.6v2.6h-2.6zM57.2 23.4h2.6v2.6h-2.6zM57.2 57.2h2.6v2.6h-2.6zM57.2 62.4h2.6v2.6h-2.6zM57.2 109.2h2.6v2.6h-2.6zM57.2 122.2h2.6v2.6h-2.6zM59.8 5.2h2.6v2.6h-2.6zM59.8 7.8h2.6v2.6h-2.6zM59.8 31.2h2.6v2.6h-2.6zM59.8 88.4h2.6v2.6h-2.6zM59.8 91.0h2.6v2.6h-2.6zM59.8 106.6h2.6v2.6h-2.6zM59.8 122.2h2.6v2.6h-2.6zM62.4 18.2h2.6v2.6h-2.6zM62.4 26.0h2.6v2.6h-2.6zM62.4 44.2h2.6v2.6h-2.6zM62.4 46.8h2.6v2.6h-2.6zM62.4 62.4h2.6v2.6h-2.6zM62.4 70.2h2.6v2.6h-2.6zM62.4 114.4h2.6v2.6h-2.6zM62.4 119.6h2.6v2.6h-2.6zM65.0 18.2h2.6v2.6h-2.6zM65.0 28.6h2.6v2.6h-2.6zM65.0 36.4h2.6v2.6h-2.6zM65.0 52.0h2.6v2.6h-2.6zM65.0 59.8h2.6v2.6h-2.6zM65.0 96.2h2.6v2.6h-2.6zM65.0 101.4h2.6v2.6h-2.6zM67.6 2.6h2.6v2.6h-2.6zM67.6 7.8h2.6v2.6h-2.6zM67.6 20.8h2.6v2.6h-2.6zM67.6 39.0h2.6v2.6h-2.6zM67.6 54.6h2.6v2.6h-2.6zM67.6 109.2h2.6v2.6h-2.6zM70.2 36.4h2.6v2.6h-2.6zM70.2 41.6h2.6v2.6h-2.6zM70.2 52.0h2.6v2.6h-2.6zM70.2 54.6h2.6v2.6h-2.6zM70.2 67.6h2.6v2.6h-2.6zM70.2 80.6h2.6v2.6h-2.6zM70.2 98.8h2.6v2.6h-2.6zM70.2 101.4h2.6v2.6h-2.6zM70.2 119.6h2.6v2.6h-2.6zM72.8 0.0h2.6v2.6h-2.6zM72.8 2.6h2.6v2.6h-2.6zM72.8 5.2h2.6v2.6h-2.6zM72.8 7.8h2.6v2.6h-2.6zM72.8 26.0h2.6v2.6h-2.6zM72.8 44.2h2.6v2.6h-2.6zM72.8 46.8h2.6v2.6h-2.6zM72.8 59.8h2.6v2.6h-2.6zM72.8 62.4h2.6v2.6h-2.6zM72.8 78.0h2.6v2.6h-2.6zM72.8 85.8h2.6v2.6h-2.6zM72.8 96.2h2.6v2.6h-2.6zM72.8 109.2h2.6v2.6h-2.6zM72.8 114.4h2.6v2.6h-2.6zM75.4 0.0h2.6v2.6h-2.6zM75.4 23.4h2.6v2.6h-2.6zM75.4 75.4h2.6v2.6h-2.6zM75.4 119.6h2.6v2.6h-2.6zM78.0 0.0h2.6v2.6h-2.6zM78.0 44.2h2.6v2.6h-2.6zM78.0 49.4h2.6v2.6h-2.6zM78.0 88.4h2.6v2.6h-2.6zM78.0 96.2h2.6v2.6h-2.6zM78.0 104.0h2.6v2.6h-2.6zM78.0 111.8h2.6v2.6h-2.6zM78.0 114.4h2.6v2.6h-2.6zM78.0 117.0h2.6v2.6h-2.6zM80.6 2.6h2.6v2.6h-2.6zM80.6 7.8h2.6v2.6h-2.6zM80.6 26.0h2.6v2.6h-2.6zM80.6 28.6h2.6v2.6h-2.6zM80.6 31.2h2.6v2.6h-2.6zM80.6 36.4h2.6v2.6h-2.6zM83.2 36.4h2.6v2.6h-2.6zM83.2 54.6h2.6v2.6h-2.6zM83.2 83.2h2.6v2.6h-2.6zM83.2 85.8h2.6v2.6h-2.6zM83.2 104.0h2.6v2.6h-2.6zM85.8 5.2h2.6v2.6h-2.6zM85.8 10.4h2.6v2.6h-2.6zM85.8 20.8h2.6v2.6h-2.6zM85.8 28.6h2.6v2.6h-2.6zM85.8 33.8h2.6v2.6h-2.6zM85.8 36.4h2.6v2.6h-2.6zM85.8 54.6h2.6v2.6h-2.6zM85.8 67.6h2.6v2.6h-2.6zM85.8 70.2h2.6v2.6h-2.6zM85.8 98.8h2.6v2.6h-2.6zM88.4 5.2h2.6v2.6h-2.6zM88.4 20.8h2.6v2.6h-2.6zM88.4 57.2h2.6v2.6h-2.6zM88.4 91.0h2.6v2.6h-2.6zM88.4 104.0h2.6v2.6h-2.6zM88.4 109.2h2.6v2.6h-2.6zM88.4 111.8h2.6v2.6h-2.6zM91.0 5.2h2.6v2.6h-2.6zM91.0 15.6h2.6v2.6h-2.6zM91.0 28.6h2.6v2.6h-2.6zM91.0 41.6h2.6v2.6h-2.6zM91.0 101.4h2.6v2.6h-2.6zM91.0 104.0h2.6v2.6h-2.6zM91.0 109.2h2.6v2.6h-2.6zM91.0 114.4h2.6v2.6h-2.6zM93.6 5.2h2.6v2.6h-2.6zM93.6 75.4h2.6v2.6h-2.6zM93.6 85.8h2.6v2.6h-2.6zM96.2 5.2h2.6v2.6h-2.6zM96.2 7.8h2.6v2.6h-2.6zM96.2 46.8h2.6v2.6h-2.6zM96.2 67.6h2.6v2.6h-2.6zM96.2 119.6h2.6v2.6h-2.6zM98.8 20.8h2.6v2.6h-2.6zM98.8 26.0h2.6v2.6h-2.6zM98.8 31.2h2.6v2.6h-2.6zM101.4 2.6h2.6v2.6h-2.6zM101.4 26.0h2.6v2.6h-2.6zM101.4 33.8h2.6v2.6h-2.6zM101.4 59.8h2.6v2.6h-2.6zM101.4 104.0h2.6v2.6h-2.6zM101.4 106.6h2.6v2.6h-2.6zM104.0 0.0h2.6v2.6h-2.6zM104.0 18.2h2.6v2.6h-2.6zM104.0 28.6h2.6v2.6h-2.6zM104.0 67.6h2.6v2.6h-2.6zM104.0 98.8h2.6v2.6h-2.6zM104.0 111.8h2.6v2.6h-2.6zM104.0 117.0h2.6v2.6h-2.6zM106.6 36.4h2.6v2.6h-2.6zM106.6 59.8h2.6v2.6h-2.6zM106.6 62.4h2.6v2.6h-2.6zM106.6 96.2h2.6v2.6h-2.6zM109.2 46.8h2.6v2.6h-2.6zM109.2 75.4h2.6v2.6h-2.6zM109.2 83.2h2.6v2.6h-2.6zM111.8 5.2h2.6v2.6h-2.6zM111.8 62.4h2.6v2.6h-2.6zM111.8 83.2h2.6v2.6h-2.6zM111.8 96.2h2.6v2.6h-2.6zM111.8 117.0h2.6v2.6h-2.6zM114.4 5.2h2.6v2.6h-2.6zM114.4 15.6h2.6v2.6h-2.6zM114.4 26.0h2.6v2.6h-2.6zM114.4 49.4h2.6v2.6h-2.6zM114.4 85.8h2.6v2.6h-2.6zM114.4 88.4h2.6v2.6h-2.6zM114.4 104.0h2.6v2.6h-2.6zM117.0 28.6h2.6v2.6h-2.6zM117.0 36.4h2.6v2.6h-2.6zM117.0 39.0h2.6v2.6h-2.6zM117.0 70.2h2.6v2.6h-2.6zM117.0 85.8h2.6v2.6h-2.6zM117.0 98.8h2.6v2.6h-2.6zM117.0 106.6h2.6v2.6h-2.6zM119.6 28.6h2.6v2.6h-2.6zM119.6 59.8h2.6v2.6h-2.6zM119.6 88.4h2.6v2.6h-2.6zM119.6 117.0h2.6v2.6h-2.6zM122.2 5.2h2.6v2.6h-2.6zM122.2 15.6h2.6v2.6h-2.6zM122.2 67.6h2.6v2.6h-2.6zM122.2 101.4h2.6v2.6h-2.6zM122.2 114.4h2.6v2.6h-2.6z" fill="#fff" fill-opacity="0.18"/><path d="M0.0 65.0h2.6v2.6h-2.6zM0.0 67.6h2.6v2.6h-2.6zM0.0 72.8h2.6v2.6h-2.6zM2.6 15.6h2.6v2.6h-2.6zM2.6 41.6h2.6v2.6h-2.6zM2.6 80.6h2.6v2.6h-2.6zM5.2 18.2h2.6v2.6h-2.6zM5.2 104.0h2.6v2.6h-2.6zM7.8 7.8h2.6v2.6h-2.6zM7.8 33.8h2.6v2.6h-2.6zM7.8 96.2h2.6v2.6h-2.6zM7.8 101.4h2.6v2.6h-2.6zM10.4 39.0h2.6v2.6h-2.6zM10.4 59.8h2.6v2.6h-2.6zM10.4 80.6h2.6v2.6h-2.6zM10.4 91.0h2.6v2.6h-2.6zM10.4 93.6h2.6v2.6h-2.6zM10.4 122.2h2.6v2.6h-2.6zM13.0 13.0h2.6v2.6h-2.6zM13.0 41.6h2.6v2.6h-2.6zM13.0 93.6h2.6v2.6h-2.6zM20.8 33.8h2.6v2.6h-2.6zM20.8 41.6h2.6v2.6h-2.6zM20.8 52.0h2.6v2.6h-2.6zM20.8 67.6h2.6v2.6h-2.6zM20.8 88.4h2.6v2.6h-2.6zM20.8 96.2h2.6v2.6h-2.6zM23.4 36.4h2.6v2.6h-2.6zM26.0 20.8h2.6v2.6h-2.6zM26.0 26.0h2.6v2.6h-2.6zM26.0 52.0h2.6v2.6h-2.6zM28.6 93.6h2.6v2.6h-2.6zM31.2 52.0h2.6v2.6h-2.6zM31.2 96.2h2.6v2.6h-2.6zM33.8 23.4h2.6v2.6h-2.6zM33.8 36.4h2.6v2.6h-2.6zM36.4 0.0h2.6v2.6h-2.6zM36.4 2.6h2.6v2.6h-2.6zM36.4 62.4h2.6v2.6h-2.6zM36.4 96.2h2.6v2.6h-2.6zM39.0 7.8h2.6v2.6h-2.6zM39.0 10.4h2.6v2.6h-2.6zM39.0 31.2h2.6v2.6h-2.6zM39.0 101.4h2.6v2.6h-2.6zM39.0 117.0h2.6v2.6h-2.6zM41.6 80.6h2.6v2.6h-2.6zM44.2 46.8h2.6v2.6h-2.6zM46.8 39.0h2.6v2.6h-2.6zM46.8 57.2h2.6v2.6h-2.6zM46.8 117.0h2.6v2.6h-2.6zM49.4 5.2h2.6v2.6h-2.6zM49.4 57.2h2.6v2.6h-2.6zM49.4 67.6h2.6v2.6h-2.6zM49.4 78.0h2.6v2.6h-2.6zM49.4 91.0h2.6v2.6h-2.6zM52.0 36.4h2.6v2.6h-2.6zM52.0 78.0h2.6v2.6h-2.6zM54.6 10.4h2.6v2.6h-2.6zM54.6 106.6h2.6v2.6h-2.6zM57.2 31.2h2.6v2.6h-2.6zM57.2 46.8h2.6v2.6h-2.6zM57.2 75.4h2.6v2.6h-2.6zM59.8 18.2h2.6v2.6h-2.6zM59.8 20.8h2.6v2.6h-2.6zM59.8 33.8h2.6v2.6h-2.6zM59.8 80.6h2.6v2.6h-2.6zM59.8 109.2h2.6v2.6h-2.6zM62.4 20.8h2.6v2.6h-2.6zM62.4 39.0h2.6v2.6h-2.6zM62.4 54.6h2.6v2.6h-2.6zM62.4 88.4h2.6v2.6h-2.6zM62.4 101.4h2.6v2.6h-2.6zM65.0 15.6h2.6v2.6h-2.6zM65.0 33.8h2.6v2.6h-2.6zM65.0 117.0h2.6v2.6h-2.6zM67.6 75.4h2.6v2.6h-2.6zM67.6 117.0h2.6v2.6h-2.6zM70.2 7.8h2.6v2.6h-2.6zM72.8 10.4h2.6v2.6h-2.6zM72.8 41.6h2.6v2.6h-2.6zM72.8 52.0h2.6v2.6h-2.6zM75.4 39.0h2.6v2.6h-2.6zM75.4 85.8h2.6v2.6h-2.6zM75.4 88.4h2.6v2.6h-2.6zM75.4 104.0h2.6v2.6h-2.6zM78.0 23.4h2.6v2.6h-2.6zM78.0 62.4h2.6v2.6h-2.6zM80.6 59.8h2.6v2.6h-2.6zM80.6 111.8h2.6v2.6h-2.6zM83.2 33.8h2.6v2.6h-2.6zM83.2 117.0h2.6v2.6h-2.6zM85.8 18.2h2.6v2.6h-2.6zM85.8 78.0h2.6v2.6h-2.6zM88.4 13.0h2.6v2.6h-2.6zM88.4 33.8h2.6v2.6h-2.6zM88.4 67.6h2.6v2.6h-2.6zM88.4 117.0h2.6v2.6h-2.6zM88.4 119.6h2.6v2.6h-2.6zM91.0 23.4h2.6v2.6h-2.6zM96.2 91.0h2.6v2.6h-2.6zM96.2 104.0h2.6v2.6h-2.6zM96.2 109.2h2.6v2.6h-2.6zM96.2 114.4h2.6v2.6h-2.6zM98.8 2.6h2.6v2.6h-2.6zM101.4 54.6h2.6v2.6h-2.6zM104.0 65.0h2.6v2.6h-2.6zM104.0 101.4h2.6v2.6h-2.6zM106.6 122.2h2.6v2.6h-2.6zM111.8 31.2h2.6v2.6h-2.6zM111.8 98.8h2.6v2.6h-2.6zM111.8 111.8h2.6v2.6h-2.6zM114.4 83.2h2.6v2.6h-2.6zM119.6 49.4h2.6v2.6h-2.6zM119.6 119.6h2.6v2.6h-2.6zM122.2 41.6h2.6v2.6h-2.6zM122.2 46.8h2.6v2.6h-2.6zM122.2 106.6h2.6v2.6h-2.6z" fill="#fff" fill-opacity="0.28"/><path d="M0.0 7.8h2.6v2.6h-2.6zM0.0 10.4h2.6v2.6h-2.6zM0.0 15.6h2.6v2.6h-2.6zM0.0 26.0h2.6v2.6h-2.6zM0.0 31.2h2.6v2.6h-2.6zM0.0 33.8h2.6v2.6h-2.6zM0.0 46.8h2.6v2.6h-2.6zM0.0 54.6h2.6v2.6h-2.6zM0.0 96.2h2.6v2.6h-2.6zM0.0 104.0h2.6v2.6h-2.6zM0.0 111.8h2.6v2.6h-2.6zM0.0 117.0h2.6v2.6h-2.6zM2.6 26.0h2.6v2.6h-2.6zM2.6 39.0h2.6v2.6h-2.6zM2.6 67.6h2.6v2.6h-2.6zM2.6 83.2h2.6v2.6h-2.6zM2.6 114.4h2.6v2.6h-2.6zM5.2 26.0h2.6v2.6h-2.6zM5.2 31.2h2.6v2.6h-2.6zM5.2 41.6h2.6v2.6h-2.6zM5.2 44.2h2.6v2.6h-2.6zM5.2 65.0h2.6v2.6h-2.6zM5.2 67.6h2.6v2.6h-2.6zM5.2 72.8h2.6v2.6h-2.6zM5.2 80.6h2.6v2.6h-2.6zM5.2 83.2h2.6v2.6h-2.6zM5.2 109.2h2.6v2.6h-2.6zM5.2 114.4h2.6v2.6h-2.6zM7.8 10.4h2.6v2.6h-2.6zM7.8 20.8h2.6v2.6h-2.6zM7.8 23.4h2.6v2.6h-2.6zM7.8 26.0h2.6v2.6h-2.6zM7.8 59.8h2.6v2.6h-2.6zM7.8 75.4h2.6v2.6h-2.6zM7.8 98.8h2.6v2.6h-2.6zM7.8 111.8h2.6v2.6h-2.6zM7.8 122.2h2.6v2.6h-2.6zM10.4 7.8h2.6v2.6h-2.6zM10.4 31.2h2.6v2.6h-2.6zM10.4 36.4h2.6v2.6h-2.6zM10.4 101.4h2.6v2.6h-2.6zM10.4 106.6h2.6v2.6h-2.6zM13.0 20.8h2.6v2.6h-2.6zM13.0 28.6h2.6v2.6h-2.6zM13.0 46.8h2.6v2.6h-2.6zM13.0 52.0h2.6v2.6h-2.6zM13.0 62.4h2.6v2.6h-2.6zM13.0 80.6h2.6v2.6h-2.6zM15.6 2.6h2.6v2.6h-2.6zM15.6 13.0h2.6v2.6h-2.6zM15.6 18.2h2.6v2.6h-2.6zM15.6 36.4h2.6v2.6h-2.6zM15.6 59.8h2.6v2.6h-2.6zM15.6 88.4h2.6v2.6h-2.6zM15.6 111.8h2.6v2.6h-2.6zM18.2 0.0h2.6v2.6h-2.6zM18.2 5.2h2.6v2.6h-2.6zM18.2 7.8h2.6v2.6h-2.6zM18.2 15.6h2.6v2.6h-2.6zM18.2 18.2h2.6v2.6h-2.6zM18.2 20.8h2.6v2.6h-2.6zM18.2 39.0h2.6v2.6h-2.6zM18.2 44.2h2.6v2.6h-2.6zM18.2 54.6h2.6v2.6h-2.6zM18.2 75.4h2.6v2.6h-2.6zM18.2 88.4h2.6v2.6h-2.6zM18.2 96.2h2.6v2.6h-2.6zM18.2 111.8h2.6v2.6h-2.6zM20.8 10.4h2.6v2.6h-2.6zM20.8 13.0h2.6v2.6h-2.6zM20.8 20.8h2.6v2.6h-2.6zM20.8 44.2h2.6v2.6h-2.6zM20.8 49.4h2.6v2.6h-2.6zM20.8 54.6h2.6v2.6h-2.6zM20.8 72.8h2.6v2.6h-2.6zM20.8 78.0h2.6v2.6h-2.6zM20.8 98.8h2.6v2.6h-2.6zM20.8 119.6h2.6v2.6h-2.6zM23.4 7.8h2.6v2.6h-2.6zM23.4 10.4h2.6v2.6h-2.6zM23.4 31.2h2.6v2.6h-2.6zM23.4 41.6h2.6v2.6h-2.6zM23.4 44.2h2.6v2.6h-2.6zM23.4 49.4h2.6v2.6h-2.6zM23.4 52.0h2.6v2.6h-2.6zM23.4 65.0h2.6v2.6h-2.6zM23.4 67.6h2.6v2.6h-2.6zM23.4 88.4h2.6v2.6h-2.6zM23.4 98.8h2.6v2.6h-2.6zM23.4 114.4h2.6v2.6h-2.6zM26.0 0.0h2.6v2.6h-2.6zM26.0 2.6h2.6v2.6h-2.6zM26.0 5.2h2.6v2.6h-2.6zM26.0 15.6h2.6v2.6h-2.6zM26.0 39.0h2.6v2.6h-2.6zM26.0 49.4h2.6v2.6h-2.6zM26.0 59.8h2.6v2.6h-2.6zM26.0 65.0h2.6v2.6h-2.6zM26.0 72.8h2.6v2.6h-2.6zM26.0 75.4h2.6v2.6h-2.6zM26.0 85.8h2.6v2.6h-2.6zM26.0 88.4h2.6v2.6h-2.6zM26.0 93.6h2.6v2.6h-2.6zM26.0 98.8h2.6v2.6h-2.6zM26.0 104.0h2.6v2.6h-2.6zM26.0 114.4h2.6v2.6h-2.6zM26.0 119.6h2.6v2.6h-2.6zM26.0 122.2h2.6v2.6h-2.6zM28.6 2.6h2.6v2.6h-2.6zM28.6 18.2h2.6v2.6h-2.6zM28.6 20.8h2.6v2.6h-2.6zM28.6 31.2h2.6v2.6h-2.6zM28.6 39.0h2.6v2.6h-2.6zM28.6 67.6h2.6v2.6h-2.6zM28.6 72.8h2.6v2.6h-2.6zM28.6 78.0h2.6v2.6h-2.6zM28.6 83.2h2.6v2.6h-2.6zM28.6 91.0h2.6v2.6h-2.6zM31.2 2.6h2.6v2.6h-2.6zM31.2 36.4h2.6v2.6h-2.6zM31.2 54.6h2.6v2.6h-2.6zM31.2 57.2h2.6v2.6h-2.6zM31.2 62.4h2.6v2.6h-2.6zM31.2 65.0h2.6v2.6h-2.6zM31.2 93.6h2.6v2.6h-2.6zM31.2 109.2h2.6v2.6h-2.6zM31.2 119.6h2.6v2.6h-2.6zM33.8 5.2h2.6v2.6h-2.6zM33.8 7.8h2.6v2.6h-2.6zM33.8 26.0h2.6v2.6h-2.6zM33.8 39.0h2.6v2.6h-2.6zM33.8 46.8h2.6v2.6h-2.6zM33.8 49.4h2.6v2.6h-2.6zM33.8 62.4h2.6v2.6h-2.6zM33.8 67.6h2.6v2.6h-2.6zM33.8 78.0h2.6v2.6h-2.6zM33.8 80.6h2.6v2.6h-2.6zM33.8 93.6h2.6v2.6h-2.6zM33.8 104.0h2.6v2.6h-2.6zM33.8 106.6h2.6v2.6h-2.6zM33.8 109.2h2.6v2.6h-2.6zM33.8 114.4h2.6v2.6h-2.6zM33.8 119.6h2.6v2.6h-2.6zM36.4 93.6h2.6v2.6h-2.6zM36.4 101.4h2.6v2.6h-2.6zM39.0 2.6h2.6v2.6h-2.6zM39.0 13.0h2.6v2.6h-2.6zM39.0 15.6h2.6v2.6h-2.6zM39.0 23.4h2.6v2.6h-2.6zM39.0 28.6h2.6v2.6h-2.6zM39.0 54.6h2.6v2.6h-2.6zM39.0 80.6h2.6v2.6h-2.6zM39.0 98.8h2.6v2.6h-2.6zM39.0 106.6h2.6v2.6h-2.6zM39.0 111.8h2.6v2.6h-2.6zM39.0 122.2h2.6v2.6h-2.6zM41.6 2.6h2.6v2.6h-2.6zM41.6 5.2h2.6v2.6h-2.6zM41.6 13.0h2.6v2.6h-2.6zM41.6 18.2h2.6v2.6h-2.6zM41.6 36.4h2.6v2.6h-2.6zM41.6 41.6h2.6v2.6h-2.6zM41.6 44.2h2.6v2.6h-2.6zM41.6 59.8h2.6v2.6h-2.6zM41.6 62.4h2.6v2.6h-2.6zM41.6 88.4h2.6v2.6h-2.6zM41.6 114.4h2.6v2.6h-2.6zM41.6 119.6h2.6v2.6h-2.6zM41.6 122.2h2.6v2.6h-2.6zM44.2 18.2h2.6v2.6h-2.6zM44.2 20.8h2.6v2.6h-2.6zM44.2 28.6h2.6v2.6h-2.6zM44.2 59.8h2.6v2.6h-2.6zM44.2 65.0h2.6v2.6h-2.6zM44.2 72.8h2.6v2.6h-2.6zM44.2 78.0h2.6v2.6h-2.6zM44.2 91.0h2.6v2.6h-2.6zM46.8 10.4h2.6v2.6h-2.6zM46.8 28.6h2.6v2.6h-2.6zM46.8 31.2h2.6v2.6h-2.6zM46.8 44.2h2.6v2.6h-2.6zM46.8 46.8h2.6v2.6h-2.6zM46.8 65.0h2.6v2.6h-2.6zM46.8 78.0h2.6v2.6h-2.6zM46.8 83.2h2.6v2.6h-2.6zM46.8 85.8h2.6v2.6h-2.6zM46.8 98.8h2.6v2.6h-2.6zM46.8 109.2h2.6v2.6h-2.6zM46.8 111.8h2.6v2.6h-2.6zM49.4 7.8h2.6v2.6h-2.6zM49.4 31.2h2.6v2.6h-2.6zM49.4 75.4h2.6v2.6h-2.6zM49.4 93.6h2.6v2.6h-2.6zM49.4 96.2h2.6v2.6h-2.6zM49.4 106.6h2.6v2.6h-2.6zM49.4 119.6h2.6v2.6h-2.6zM52.0 7.8h2.6v2.6h-2.6zM52.0 10.4h2.6v2.6h-2.6zM52.0 46.8h2.6v2.6h-2.6zM52.0 54.6h2.6v2.6h-2.6zM52.0 57.2h2.6v2.6h-2.6zM52.0 65.0h2.6v2.6h-2.6zM52.0 70.2h2.6v2.6h-2.6zM52.0 117.0h2.6v2.6h-2.6zM54.6 0.0h2.6v2.6h-2.6zM54.6 7.8h2.6v2.6h-2.6zM54.6 20.8h2.6v2.6h-2.6zM54.6 26.0h2.6v2.6h-2.6zM54.6 39.0h2.6v2.6h-2.6zM54.6 41.6h2.6v2.6h-2.6zM54.6 52.0h2.6v2.6h-2.6zM54.6 67.6h2.6v2.6h-2.6zM54.6 85.8h2.6v2.6h-2.6zM54.6 91.0h2.6v2.6h-2.6zM54.6 101.4h2.6v2.6h-2.6zM54.6 111.8h2.6v2.6h-2.6zM54.6 117.0h2.6v2.6h-2.6zM57.2 0.0h2.6v2.6h-2.6zM57.2 5.2h2.6v2.6h-2.6zM57.2 7.8h2.6v2.6h-2.6zM57.2 10.4h2.6v2.6h-2.6zM57.2 15.6h2.6v2.6h-2.6zM57.2 18.2h2.6v2.6h-2.6zM57.2 28.6h2.6v2.6h-2.6zM57.2 49.4h2.6v2.6h-2.6zM57.2 59.8h2.6v2.6h-2.6zM57.2 72.8h2.6v2.6h-2.6zM57.2 85.8h2.6v2.6h-2.6zM57.2 91.0h2.6v2.6h-2.6zM57.2 96.2h2.6v2.6h-2.6zM57.2 106.6h2.6v2.6h-2.6zM59.8 23.4h2.6v2.6h-2.6zM59.8 36.4h2.6v2.6h-2.6zM59.8 49.4h2.6v2.6h-2.6zM59.8 72.8h2.6v2.6h-2.6zM59.8 75.4h2.6v2.6h-2.6zM62.4 49.4h2.6v2.6h-2.6zM62.4 83.2h2.6v2.6h-2.6zM62.4 93.6h2.6v2.6h-2.6zM62.4 106.6h2.6v2.6h-2.6zM62.4 122.2h2.6v2.6h-2.6zM65.0 44.2h2.6v2.6h-2.6zM65.0 57.2h2.6v2.6h-2.6zM65.0 75.4h2.6v2.6h-2.6zM65.0 122.2h2.6v2.6h-2.6zM67.6 0.0h2.6v2.6h-2.6zM67.6 10.4h2.6v2.6h-2.6zM67.6 31.2h2.6v2.6h-2.6zM67.6 44.2h2.6v2.6h-2.6zM67.6 49.4h2.6v2.6h-2.6zM67.6 65.0h2.6v2.6h-2.6zM67.6 70.2h2.6v2.6h-2.6zM67.6 72.8h2.6v2.6h-2.6zM67.6 80.6h2.6v2.6h-2.6zM67.6 83.2h2.6v2.6h-2.6zM67.6 88.4h2.6v2.6h-2.6zM67.6 104.0h2.6v2.6h-2.6zM67.6 111.8h2.6v2.6h-2.6zM70.2 0.0h2.6v2.6h-2.6zM70.2 5.2h2.6v2.6h-2.6zM70.2 13.0h2.6v2.6h-2.6zM70.2 15.6h2.6v2.6h-2.6zM70.2 33.8h2.6v2.6h-2.6zM70.2 72.8h2.6v2.6h-2.6zM70.2 106.6h2.6v2.6h-2.6zM70.2 117.0h2.6v2.6h-2.6zM72.8 31.2h2.6v2.6h-2.6zM72.8 33.8h2.6v2.6h-2.6zM72.8 57.2h2.6v2.6h-2.6zM72.8 75.4h2.6v2.6h-2.6zM72.8 93.6h2.6v2.6h-2.6zM75.4 7.8h2.6v2.6h-2.6zM75.4 10.4h2.6v2.6h-2.6zM75.4 28.6h2.6v2.6h-2.6zM75.4 33.8h2.6v2.6h-2.6zM75.4 44.2h2.6v2.6h-2.6zM75.4 46.8h2.6v2.6h-2.6zM75.4 67.6h2.6v2.6h-2.6zM75.4 78.0h2.6v2.6h-2.6zM75.4 91.0h2.6v2.6h-2.6zM75.4 93.6h2.6v2.6h-2.6zM75.4 98.8h2.6v2.6h-2.6zM75.4 106.6h2.6v2.6h-2.6zM78.0 2.6h2.6v2.6h-2.6zM78.0 13.0h2.6v2.6h-2.6zM78.0 28.6h2.6v2.6h-2.6zM78.0 31.2h2.6v2.6h-2.6zM78.0 33.8h2.6v2.6h-2.6zM78.0 52.0h2.6v2.6h-2.6zM78.0 59.8h2.6v2.6h-2.6zM78.0 70.2h2.6v2.6h-2.6zM78.0 72.8h2.6v2.6h-2.6zM78.0 78.0h2.6v2.6h-2.6zM78.0 80.6h2.6v2.6h-2.6zM78.0 91.0h2.6v2.6h-2.6zM78.0 101.4h2.6v2.6h-2.6zM78.0 122.2h2.6v2.6h-2.6zM80.6 39.0h2.6v2.6h-2.6zM80.6 49.4h2.6v2.6h-2.6zM80.6 62.4h2.6v2.6h-2.6zM80.6 65.0h2.6v2.6h-2.6zM80.6 67.6h2.6v2.6h-2.6zM80.6 80.6h2.6v2.6h-2.6zM80.6 83.2h2.6v2.6h-2.6zM80.6 91.0h2.6v2.6h-2.6zM80.6 98.8h2.6v2.6h-2.6zM80.6 101.4h2.6v2.6h-2.6zM80.6 122.2h2.6v2.6h-2.6zM83.2 0.0h2.6v2.6h-2.6zM83.2 23.4h2.6v2.6h-2.6zM83.2 26.0h2.6v2.6h-2.6zM83.2 39.0h2.6v2.6h-2.6zM83.2 44.2h2.6v2.6h-2.6zM83.2 49.4h2.6v2.6h-2.6zM83.2 52.0h2.6v2.6h-2.6zM83.2 57.2h2.6v2.6h-2.6zM83.2 59.8h2.6v2.6h-2.6zM83.2 70.2h2.6v2.6h-2.6zM83.2 72.8h2.6v2.6h-2.6zM83.2 88.4h2.6v2.6h-2.6zM83.2 91.0h2.6v2.6h-2.6zM83.2 106.6h2.6v2.6h-2.6zM83.2 114.4h2.6v2.6h-2.6zM85.8 13.0h2.6v2.6h-2.6zM85.8 15.6h2.6v2.6h-2.6zM85.8 52.0h2.6v2.6h-2.6zM85.8 57.2h2.6v2.6h-2.6zM85.8 75.4h2.6v2.6h-2.6zM85.8 101.4h2.6v2.6h-2.6zM85.8 119.6h2.6v2.6h-2.6zM85.8 122.2h2.6v2.6h-2.6zM88.4 15.6h2.6v2.6h-2.6zM88.4 44.2h2.6v2.6h-2.6zM88.4 59.8h2.6v2.6h-2.6zM88.4 70.2h2.6v2.6h-2.6zM88.4 75.4h2.6v2.6h-2.6zM88.4 78.0h2.6v2.6h-2.6zM88.4 85.8h2.6v2.6h-2.6zM88.4 98.8h2.6v2.6h-2.6zM91.0 0.0h2.6v2.6h-2.6zM91.0 10.4h2.6v2.6h-2.6zM91.0 33.8h2.6v2.6h-2.6zM91.0 65.0h2.6v2.6h-2.6zM91.0 70.2h2.6v2.6h-2.6zM91.0 78.0h2.6v2.6h-2.6zM91.0 80.6h2.6v2.6h-2.6zM91.0 83.2h2.6v2.6h-2.6zM91.0 88.4h2.6v2.6h-2.6zM91.0 96.2h2.6v2.6h-2.6zM91.0 111.8h2.6v2.6h-2.6zM91.0 117.0h2.6v2.6h-2.6zM93.6 7.8h2.6v2.6h-2.6zM93.6 15.6h2.6v2.6h-2.6zM93.6 46.8h2.6v2.6h-2.6zM93.6 49.4h2.6v2.6h-2.6zM93.6 54.6h2.6v2.6h-2.6zM93.6 57.2h2.6v2.6h-2.6zM93.6 78.0h2.6v2.6h-2.6zM93.6 98.8h2.6v2.6h-2.6zM93.6 106.6h2.6v2.6h-2.6zM93.6 117.0h2.6v2.6h-2.6zM93.6 122.2h2.6v2.6h-2.6zM96.2 0.0h2.6v2.6h-2.6zM96.2 39.0h2.6v2.6h-2.6zM96.2 70.2h2.6v2.6h-2.6zM96.2 78.0h2.6v2.6h-2.6zM96.2 98.8h2.6v2.6h-2.6zM98.8 13.0h2.6v2.6h-2.6zM98.8 36.4h2.6v2.6h-2.6zM98.8 39.0h2.6v2.6h-2.6zM98.8 44.2h2.6v2.6h-2.6zM98.8 49.4h2.6v2.6h-2.6zM98.8 52.0h2.6v2.6h-2.6zM98.8 85.8h2.6v2.6h-2.6zM98.8 91.0h2.6v2.6h-2.6zM98.8 106.6h2.6v2.6h-2.6zM98.8 109.2h2.6v2.6h-2.6zM98.8 114.4h2.6v2.6h-2.6zM98.8 117.0h2.6v2.6h-2.6zM101.4 36.4h2.6v2.6h-2.6zM101.4 52.0h2.6v2.6h-2.6zM101.4 62.4h2.6v2.6h-2.6zM101.4 67.6h2.6v2.6h-2.6zM101.4 78.0h2.6v2.6h-2.6zM101.4 93.6h2.6v2.6h-2.6zM101.4 114.4h2.6v2.6h-2.6zM104.0 44.2h2.6v2.6h-2.6zM104.0 49.4h2.6v2.6h-2.6zM104.0 88.4h2.6v2.6h-2.6zM104.0 91.0h2.6v2.6h-2.6zM104.0 114.4h2.6v2.6h-2.6zM106.6 5.2h2.6v2.6h-2.6zM106.6 18.2h2.6v2.6h-2.6zM106.6 20.8h2.6v2.6h-2.6zM106.6 28.6h2.6v2.6h-2.6zM106.6 39.0h2.6v2.6h-2.6zM106.6 41.6h2.6v2.6h-2.6zM106.6 49.4h2.6v2.6h-2.6zM106.6 72.8h2.6v2.6h-2.6zM106.6 91.0h2.6v2.6h-2.6zM106.6 119.6h2.6v2.6h-2.6zM109.2 0.0h2.6v2.6h-2.6zM109.2 5.2h2.6v2.6h-2.6zM109.2 26.0h2.6v2.6h-2.6zM109.2 41.6h2.6v2.6h-2.6zM109.2 44.2h2.6v2.6h-2.6zM109.2 49.4h2.6v2.6h-2.6zM109.2 52.0h2.6v2.6h-2.6zM109.2 67.6h2.6v2.6h-2.6zM109.2 80.6h2.6v2.6h-2.6zM109.2 114.4h2.6v2.6h-2.6zM109.2 117.0h2.6v2.6h-2.6zM109.2 122.2h2.6v2.6h-2.6zM111.8 2.6h2.6v2.6h-2.6zM111.8 7.8h2.6v2.6h-2.6zM111.8 13.0h2.6v2.6h-2.6zM111.8 15.6h2.6v2.6h-2.6zM111.8 28.6h2.6v2.6h-2.6zM111.8 36.4h2.6v2.6h-2.6zM111.8 57.2h2.6v2.6h-2.6zM111.8 70.2h2.6v2.6h-2.6zM111.8 88.4h2.6v2.6h-2.6zM111.8 106.6h2.6v2.6h-2.6zM111.8 122.2h2.6v2.6h-2.6zM114.4 2.6h2.6v2.6h-2.6zM114.4 36.4h2.6v2.6h-2.6zM114.4 54.6h2.6v2.6h-2.6zM114.4 59.8h2.6v2.6h-2.6zM114.4 75.4h2.6v2.6h-2.6zM114.4 80.6h2.6v2.6h-2.6zM114.4 114.4h2.6v2.6h-2.6zM114.4 119.6h2.6v2.6h-2.6zM114.4 122.2h2.6v2.6h-2.6zM117.0 13.0h2.6v2.6h-2.6zM117.0 23.4h2.6v2.6h-2.6zM117.0 31.2h2.6v2.6h-2.6zM117.0 49.4h2.6v2.6h-2.6zM117.0 54.6h2.6v2.6h-2.6zM117.0 62.4h2.6v2.6h-2.6zM117.0 75.4h2.6v2.6h-2.6zM117.0 83.2h2.6v2.6h-2.6zM117.0 88.4h2.6v2.6h-2.6zM117.0 93.6h2.6v2.6h-2.6zM117.0 117.0h2.6v2.6h-2.6zM117.0 122.2h2.6v2.6h-2.6zM119.6 5.2h2.6v2.6h-2.6zM119.6 20.8h2.6v2.6h-2.6zM119.6 36.4h2.6v2.6h-2.6zM119.6 80.6h2.6v2.6h-2.6zM119.6 85.8h2.6v2.6h-2.6zM119.6 93.6h2.6v2.6h-2.6zM119.6 98.8h2.6v2.6h-2.6zM119.6 106.6h2.6v2.6h-2.6zM119.6 122.2h2.6v2.6h-2.6zM122.2 0.0h2.6v2.6h-2.6zM122.2 2.6h2.6v2.6h-2.6zM122.2 20.8h2.6v2.6h-2.6zM122.2 23.4h2.6v2.6h-2.6zM122.2 31.2h2.6v2.6h-2.6zM122.2 39.0h2.6v2.6h-2.6zM122.2 62.4h2.6v2.6h-2.6zM122.2 72.8h2.6v2.6h-2.6zM122.2 91.0h2.6v2.6h-2.6zM122.2 96.2h2.6v2.6h-2.6zM122.2 117.0h2.6v2.6h-2.6zM122.2 119.6h2.6v2.6h-2.6z" fill="#000" fill-opacity="0.08"/><path d="M0.0 62.4h2.6v2.6h-2.6zM0.0 80.6h2.6v2.6h-2.6zM0.0 93.6h2.6v2.6h-2.6zM0.0 122.2h2.6v2.6h-2.6zM2.6 52.0h2.6v2.6h-2.6zM2.6 59.8h2.6v2.6h-2.6zM2.6 85.8h2.6v2.6h-2.6zM2.6 104.0h2.6v2.6h-2.6zM2.6 119.6h2.6v2.6h-2.6zM2.6 122.2h2.6v2.6h-2.6zM5.2 5.2h2.6v2.6h-2.6zM5.2 33.8h2.6v2.6h-2.6zM5.2 75.4h2.6v2.6h-2.6zM5.2 88.4h2.6v2.6h-2.6zM5.2 98.8h2.6v2.6h-2.6zM5.2 111.8h2.6v2.6h-2.6zM5.2 122.2h2.6v2.6h-2.6zM7.8 5.2h2.6v2.6h-2.6zM7.8 13.0h2.6v2.6h-2.6zM7.8 31.2h2.6v2.6h-2.6zM7.8 109.2h2.6v2.6h-2.6zM7.8 114.4h2.6v2.6h-2.6zM10.4 0.0h2.6v2.6h-2.6zM10.4 15.6h2.6v2.6h-2.6zM10.4 20.8h2.6v2.6h-2.6zM13.0 2.6h2.6v2.6h-2.6zM13.0 23.4h2.6v2.6h-2.6zM13.0 26.0h2.6v2.6h-2.6zM13.0 44.2h2.6v2.6h-2.6zM13.0 54.6h2.6v2.6h-2.6zM13.0 78.0h2.6v2.6h-2.6zM13.0 85.8h2.6v2.6h-2.6zM13.0 88.4h2.6v2.6h-2.6zM13.0 101.4h2.6v2.6h-2.6zM15.6 39.0h2.6v2.6h-2.6zM15.6 41.6h2.6v2.6h-2.6zM15.6 44.2h2.6v2.6h-2.6zM15.6 49.4h2.6v2.6h-2.6zM15.6 57.2h2.6v2.6h-2.6zM15.6 72.8h2.6v2.6h-2.6zM15.6 98.8h2.6v2.6h-2.6zM15.6 101.4h2.6v2.6h-2.6zM15.6 119.6h2.6v2.6h-2.6zM18.2 31.2h2.6v2.6h-2.6zM18.2 62.4h2.6v2.6h-2.6zM18.2 70.2h2.6v2.6h-2.6zM18.2 91.0h2.6v2.6h-2.6zM18.2 109.2h2.6v2.6h-2.6zM20.8 23.4h2.6v2.6h-2.6zM20.8 62.4h2.6v2.6h-2.6zM20.8 75.4h2.6v2.6h-2.6zM20.8 93.6h2.6v2.6h-2.6zM20.8 114.4h2.6v2.6h-2.6zM23.4 13.0h2.6v2.6h-2.6zM23.4 18.2h2.6v2.6h-2.6zM23.4 26.0h2.6v2.6h-2.6zM23.4 54.6h2.6v2.6h-2.6zM23.4 59.8h2.6v2.6h-2.6zM23.4 85.8h2.6v2.6h-2.6zM23.4 96.2h2.6v2.6h-2.6zM23.4 101.4h2.6v2.6h-2.6zM23.4 106.6h2.6v2.6h-2.6zM23.4 122.2h2.6v2.6h-2.6zM26.0 10.4h2.6v2.6h-2.6zM26.0 106.6h2.6v2.6h-2.6zM28.6 36.4h2.6v2.6h-2.6zM28.6 52.0h2.6v2.6h-2.6zM28.6 98.8h2.6v2.6h-2.6zM28.6 104.0h2.6v2.6h-2.6zM28.6 106.6h2.6v2.6h-2.6zM28.6 109.2h2.6v2.6h-2.6zM31.2 15.6h2.6v2.6h-2.6zM31.2 49.4h2.6v2.6h-2.6zM31.2 59.8h2.6v2.6h-2.6zM31.2 80.6h2.6v2.6h-2.6zM31.2 83.2h2.6v2.6h-2.6zM31.2 111.8h2.6v2.6h-2.6zM31.2 122.2h2.6v2.6h-2.6zM33.8 54.6h2.6v2.6h-2.6zM33.8 122.2h2.6v2.6h-2.6zM36.4 10.4h2.6v2.6h-2.6zM36.4 15.6h2.6v2.6h-2.6zM36.4 39.0h2.6v2.6h-2.6zM36.4 46.8h2.6v2.6h-2.6zM36.4 57.2h2.6v2.6h-2.6zM36.4 59.8h2.6v2.6h-2.6zM36.4 72.8h2.6v2.6h-2.6zM36.4 78.0h2.6v2.6h-2.6zM36.4 88.4h2.6v2.6h-2.6zM36.4 91.0h2.6v2.6h-2.6zM36.4 98.8h2.6v2.6h-2.6zM36.4 117.0h2.6v2.6h-2.6zM39.0 52.0h2.6v2.6h-2.6zM39.0 83.2h2.6v2.6h-2.6zM41.6 0.0h2.6v2.6h-2.6zM41.6 26.0h2.6v2.6h-2.6zM41.6 33.8h2.6v2.6h-2.6zM41.6 39.0h2.6v2.6h-2.6zM41.6 46.8h2.6v2.6h-2.6zM41.6 54.6h2.6v2.6h-2.6zM41.6 72.8h2.6v2.6h-2.6zM44.2 33.8h2.6v2.6h-2.6zM44.2 54.6h2.6v2.6h-2.6zM44.2 75.4h2.6v2.6h-2.6zM44.2 122.2h2.6v2.6h-2.6zM46.8 122.2h2.6v2.6h-2.6zM49.4 10.4h2.6v2.6h-2.6zM49.4 15.6h2.6v2.6h-2.6zM49.4 26.0h2.6v2.6h-2.6zM49.4 44.2h2.6v2.6h-2.6zM49.4 70.2h2.6v2.6h-2.6zM49.4 85.8h2.6v2.6h-2.6zM49.4 88.4h2.6v2.6h-2.6zM52.0 2.6h2.6v2.6h-2.6zM52.0 31.2h2.6v2.6h-2.6zM52.0 62.4h2.6v2.6h-2.6zM52.0 72.8h2.6v2.6h-2.6zM52.0 75.4h2.6v2.6h-2.6zM52.0 85.8h2.6v2.6h-2.6zM52.0 91.0h2.6v2.6h-2.6zM54.6 31.2h2.6v2.6h-2.6zM54.6 93.6h2.6v2.6h-2.6zM54.6 98.8h2.6v2.6h-2.6zM54.6 109.2h2.6v2.6h-2.6zM54.6 114.4h2.6v2.6h-2.6zM57.2 13.0h2.6v2.6h-2.6zM57.2 44.2h2.6v2.6h-2.6zM57.2 111.8h2.6v2.6h-2.6zM57.2 114.4h2.6v2.6h-2.6zM59.8 10.4h2.6v2.6h-2.6zM59.8 15.6h2.6v2.6h-2.6zM59.8 46.8h2.6v2.6h-2.6zM59.8 59.8h2.6v2.6h-2.6zM59.8 85.8h2.6v2.6h-2.6zM59.8 93.6h2.6v2.6h-2.6zM59.8 96.2h2.6v2.6h-2.6zM59.8 101.4h2.6v2.6h-2.6zM59.8 104.0h2.6v2.6h-2.6zM59.8 111.8h2.6v2.6h-2.6zM62.4 5.2h2.6v2.6h-2.6zM62.4 10.4h2.6v2.6h-2.6zM62.4 15.6h2.6v2.6h-2.6zM62.4 80.6h2.6v2.6h-2.6zM65.0 7.8h2.6v2.6h-2.6zM65.0 20.8h2.6v2.6h-2.6zM65.0 39.0h2.6v2.6h-2.6zM65.0 41.6h2.6v2.6h-2.6zM65.0 54.6h2.6v2.6h-2.6zM65.0 78.0h2.6v2.6h-2.6zM65.0 93.6h2.6v2.6h-2.6zM65.0 104.0h2.6v2.6h-2.6zM65.0 114.4h2.6v2.6h-2.6zM65.0 119.6h2.6v2.6h-2.6zM67.6 15.6h2.6v2.6h-2.6zM67.6 33.8h2.6v2.6h-2.6zM67.6 36.4h2.6v2.6h-2.6zM67.6 57.2h2.6v2.6h-2.6zM70.2 28.6h2.6v2.6h-2.6zM70.2 39.0h2.6v2.6h-2.6zM70.2 65.0h2.6v2.6h-2.6zM70.2 83.2h2.6v2.6h-2.6zM70.2 88.4h2.6v2.6h-2.6zM72.8 18.2h2.6v2.6h-2.6zM72.8 28.6h2.6v2.6h-2.6zM75.4 59.8h2.6v2.6h-2.6zM75.4 65.0h2.6v2.6h-2.6zM75.4 70.2h2.6v2.6h-2.6zM75.4 83.2h2.6v2.6h-2.6zM75.4 111.8h2.6v2.6h-2.6zM75.4 122.2h2.6v2.6h-2.6zM78.0 7.8h2.6v2.6h-2.6zM78.0 93.6h2.6v2.6h-2.6zM80.6 10.4h2.6v2.6h-2.6zM80.6 33.8h2.6v2.6h-2.6zM80.6 41.6h2.6v2.6h-2.6zM80.6 46.8h2.6v2.6h-2.6zM80.6 57.2h2.6v2.6h-2.6zM83.2 13.0h2.6v2.6h-2.6zM83.2 28.6h2.6v2.6h-2.6zM83.2 65.0h2.6v2.6h-2.6zM83.2 96.2h2.6v2.6h-2.6zM83.2 98.8h2.6v2.6h-2.6zM83.2 119.6h2.6v2.6h-2.6zM85.8 49.4h2.6v2.6h-2.6zM85.8 91.0h2.6v2.6h-2.6zM85.8 109.2h2.6v2.6h-2.6zM85.8 117.0h2.6v2.6h-2.6zM88.4 2.6h2.6v2.6h-2.6zM88.4 46.8h2.6v2.6h-2.6zM88.4 65.0h2.6v2.6h-2.6zM88.4 83.2h2.6v2.6h-2.6zM88.4 93.6h2.6v2.6h-2.6zM91.0 2.6h2.6v2.6h-2.6zM91.0 44.2h2.6v2.6h-2.6zM91.0 72.8h2.6v2.6h-2.6zM91.0 75.4h2.6v2.6h-2.6zM91.0 98.8h2.6v2.6h-2.6zM93.6 0.0h2.6v2.6h-2.6zM93.6 10.4h2.6v2.6h-2.6zM93.6 20.8h2.6v2.6h-2.6zM93.6 33.8h2.6v2.6h-2.6zM93.6 36.4h2.6v2.6h-2.6zM93.6 39.0h2.6v2.6h-2.6zM93.6 44.2h2.6v2.6h-2.6zM93.6 52.0h2.6v2.6h-2.6zM93.6 67.6h2.6v2.6h-2.6zM93.6 72.8h2.6v2.6h-2.6zM93.6 93.6h2.6v2.6h-2.6zM93.6 104.0h2.6v2.6h-2.6zM93.6 119.6h2.6v2.6h-2.6zM96.2 10.4h2.6v2.6h-2.6zM96.2 33.8h2.6v2.6h-2.6zM96.2 57.2h2.6v2.6h-2.6zM96.2 83.2h2.6v2.6h-2.6zM96.2 106.6h2.6v2.6h-2.6zM96.2 117.0h2.6v2.6h-2.6zM98.8 10.4h2.6v2.6h-2.6zM98.8 15.6h2.6v2.6h-2.6zM98.8 54.6h2.6v2.6h-2.6zM98.8 67.6h2.6v2.6h-2.6zM98.8 88.4h2.6v2.6h-2.6zM98.8 96.2h2.6v2.6h-2.6zM101.4 10.4h2.6v2.6h-2.6zM101.4 15.6h2.6v2.6h-2.6zM101.4 18.2h2.6v2.6h-2.6zM101.4 28.6h2.6v2.6h-2.6zM101.4 41.6h2.6v2.6h-2.6zM101.4 46.8h2.6v2.6h-2.6zM101.4 57.2h2.6v2.6h-2.6zM101.4 70.2h2.6v2.6h-2.6zM101.4 98.8h2.6v2.6h-2.6zM101.4 109.2h2.6v2.6h-2.6zM101.4 111.8h2.6v2.6h-2.6zM104.0 2.6h2.6v2.6h-2.6zM104.0 39.0h2.6v2.6h-2.6zM104.0 52.0h2.6v2.6h-2.6zM104.0 54.6h2.6v2.6h-2.6zM104.0 62.4h2.6v2.6h-2.6zM104.0 83.2h2.6v2.6h-2.6zM106.6 7.8h2.6v2.6h-2.6zM106.6 23.4h2.6v2.6h-2.6zM106.6 57.2h2.6v2.6h-2.6zM106.6 75.4h2.6v2.6h-2.6zM106.6 83.2h2.6v2.6h-2.6zM106.6 88.4h2.6v2.6h-2.6zM106.6 98.8h2.6v2.6h-2.6zM106.6 109.2h2.6v2.6h-2.6zM109.2 2.6h2.6v2.6h-2.6zM109.2 10.4h2.6v2.6h-2.6zM109.2 13.0h2.6v2.6h-2.6zM109.2 15.6h2.6v2.6h-2.6zM109.2 62.4h2.6v2.6h-2.6zM109.2 93.6h2.6v2.6h-2.6zM109.2 98.8h2.6v2.6h-2.6zM109.2 101.4h2.6v2.6h-2.6zM111.8 18.2h2.6v2.6h-2.6zM111.8 20.8h2.6v2.6h-2.6zM111.8 65.0h2.6v2.6h-2.6zM111.8 72.8h2.6v2.6h-2.6zM111.8 78.0h2.6v2.6h-2.6zM111.8 109.2h2.6v2.6h-2.6zM114.4 10.4h2.6v2.6h-2.6zM114.4 18.2h2.6v2.6h-2.6zM114.4 33.8h2.6v2.6h-2.6zM114.4 65.0h2.6v2.6h-2.6zM114.4 101.4h2.6v2.6h-2.6zM114.4 109.2h2.6v2.6h-2.6zM114.4 111.8h2.6v2.6h-2.6zM117.0 0.0h2.6v2.6h-2.6zM117.0 20.8h2.6v2.6h-2.6zM117.0 57.2h2.6v2.6h-2.6zM117.0 65.0h2.6v2.6h-2.6zM117.0 78.0h2.6v2.6h-2.6zM117.0 104.0h2.6v2.6h-2.6zM117.0 114.4h2.6v2.6h-2.6zM117.0 119.6h2.6v2.6h-2.6zM119.6 13.0h2.6v2.6h-2.6zM119.6 44.2h2.6v2.6h-2.6zM119.6 65.0h2.6v2.6h-2.6zM119.6 75.4h2.6v2.6h-2.6zM119.6 96.2h2.6v2.6h-2.6zM119.6 104.0h2.6v2.6h-2.6zM119.6 114.4h2.6v2.6h-2.6zM122.2 7.8h2.6v2.6h-2.6zM122.2 70.2h2.6v2.6h-2.6zM122.2 109.2h2.6v2.6h-2.6z" fill="#000" fill-opacity="0.16"/><path d="M0.0 88.4h2.6v2.6h-2.6zM0.0 106.6h2.6v2.6h-2.6zM2.6 5.2h2.6v2.6h-2.6zM2.6 49.4h2.6v2.6h-2.6zM2.6 72.8h2.6v2.6h-2.6zM7.8 39.0h2.6v2.6h-2.6zM7.8 93.6h2.6v2.6h-2.6zM10.4 18.2h2.6v2.6h-2.6zM13.0 33.8h2.6v2.6h-2.6zM15.6 10.4h2.6v2.6h-2.6zM15.6 80.6h2.6v2.6h-2.6zM15.6 122.2h2.6v2.6h-2.6zM18.2 36.4h2.6v2.6h-2.6zM18.2 114.4h2.6v2.6h-2.6zM18.2 117.0h2.6v2.6h-2.6zM20.8 85.8h2.6v2.6h-2.6zM23.4 15.6h2.6v2.6h-2.6zM23.4 78.0h2.6v2.6h-2.6zM26.0 33.8h2.6v2.6h-2.6zM26.0 109.2h2.6v2.6h-2.6zM28.6 85.8h2.6v2.6h-2.6zM31.2 10.4h2.6v2.6h-2.6zM31.2 31.2h2.6v2.6h-2.6zM31.2 72.8h2.6v2.6h-2.6zM31.2 117.0h2.6v2.6h-2.6zM33.8 33.8h2.6v2.6h-2.6zM33.8 59.8h2.6v2.6h-2.6zM33.8 65.0h2.6v2.6h-2.6zM33.8 72.8h2.6v2.6h-2.6zM36.4 23.4h2.6v2.6h-2.6zM36.4 33.8h2.6v2.6h-2.6zM36.4 75.4h2.6v2.6h-2.6zM39.0 39.0h2.6v2.6h-2.6zM39.0 41.6h2.6v2.6h-2.6zM39.0 46.8h2.6v2.6h-2.6zM39.0 85.8h2.6v2.6h-2.6zM39.0 114.4h2.6v2.6h-2.6zM41.6 7.8h2.6v2.6h-2.6zM41.6 10.4h2.6v2.6h-2.6zM41.6 49.4h2.6v2.6h-2.6zM41.6 91.0h2.6v2.6h-2.6zM44.2 26.0h2.6v2.6h-2.6zM44.2 49.4h2.6v2.6h-2.6zM44.2 85.8h2.6v2.6h-2.6zM46.8 5.2h2.6v2.6h-2.6zM46.8 15.6h2.6v2.6h-2.6zM46.8 49.4h2.6v2.6h-2.6zM46.8 52.0h2.6v2.6h-2.6zM46.8 80.6h2.6v2.6h-2.6zM49.4 28.6h2.6v2.6h-2.6zM49.4 80.6h2.6v2.6h-2.6zM49.4 114.4h2.6v2.6h-2.6zM52.0 5.2h2.6v2.6h-2.6zM52.0 20.8h2.6v2.6h-2.6zM52.0 23.4h2.6v2.6h-2.6zM52.0 101.4h2.6v2.6h-2.6zM52.0 114.4h2.6v2.6h-2.6zM54.6 2.6h2.6v2.6h-2.6zM54.6 23.4h2.6v2.6h-2.6zM57.2 39.0h2.6v2.6h-2.6zM57.2 54.6h2.6v2.6h-2.6zM57.2 78.0h2.6v2.6h-2.6zM57.2 80.6h2.6v2.6h-2.6zM62.4 65.0h2.6v2.6h-2.6zM62.4 91.0h2.6v2.6h-2.6zM62.4 117.0h2.6v2.6h-2.6zM67.6 46.8h2.6v2.6h-2.6zM67.6 62.4h2.6v2.6h-2.6zM70.2 10.4h2.6v2.6h-2.6zM70.2 70.2h2.6v2.6h-2.6zM70.2 75.4h2.6v2.6h-2.6zM72.8 36.4h2.6v2.6h-2.6zM75.4 15.6h2.6v2.6h-2.6zM75.4 114.4h2.6v2.6h-2.6zM78.0 10.4h2.6v2.6h-2.6zM78.0 15.6h2.6v2.6h-2.6zM78.0 41.6h2.6v2.6h-2.6zM78.0 109.2h2.6v2.6h-2.6zM80.6 23.4h2.6v2.6h-2.6zM83.2 18.2h2.6v2.6h-2.6zM83.2 67.6h2.6v2.6h-2.6zM85.8 2.6h2.6v2.6h-2.6zM85.8 31.2h2.6v2.6h-2.6zM85.8 93.6h2.6v2.6h-2.6zM88.4 80.6h2.6v2.6h-2.6zM88.4 114.4h2.6v2.6h-2.6zM91.0 20.8h2.6v2.6h-2.6zM91.0 122.2h2.6v2.6h-2.6zM93.6 18.2h2.6v2.6h-2.6zM96.2 13.0h2.6v2.6h-2.6zM96.2 15.6h2.6v2.6h-2.6zM96.2 20.8h2.6v2.6h-2.6zM96.2 36.4h2.6v2.6h-2.6zM96.2 62.4h2.6v2.6h-2.6zM96.2 72.8h2.6v2.6h-2.6zM96.2 101.4h2.6v2.6h-2.6zM98.8 78.0h2.6v2.6h-2.6zM101.4 49.4h2.6v2.6h-2.6zM101.4 83.2h2.6v2.6h-2.6zM101.4 122.2h2.6v2.6h-2.6zM104.0 93.6h2.6v2.6h-2.6zM106.6 80.6h2.6v2.6h-2.6zM106.6 106.6h2.6v2.6h-2.6zM106.6 114.4h2.6v2.6h-2.6zM109.2 18.2h2.6v2.6h-2.6zM109.2 28.6h2.6v2.6h-2.6zM109.2 54.6h2.6v2.6h-2.6zM109.2 70.2h2.6v2.6h-2.6zM111.8 26.0h2.6v2.6h-2.6zM111.8 41.6h2.6v2.6h-2.6zM111.8 44.2h2.6v2.6h-2.6zM111.8 101.4h2.6v2.6h-2.6zM114.4 67.6h2.6v2.6h-2.6zM114.4 106.6h2.6v2.6h-2.6zM117.0 2.6h2.6v2.6h-2.6zM117.0 5.2h2.6v2.6h-2.6zM119.6 26.0h2.6v2.6h-2.6zM122.2 33.8h2.6v2.6h-2.6zM122.2 93.6h2.6v2.6h-2.6z" fill="#000" fill-opacity="0.24"/></pattern></defs><g clip-path="url(#bc)"><g filter="url(#jetmap)"><rect x="340" y="110" width="580" height="470" fill="rgb(164,164,164)"/><g filter="url(#b12)"><ellipse cx="720" cy="505" rx="175" ry="55" fill="rgb(145,145,145)" opacity="1" transform="rotate(0 720 505)"/><ellipse cx="640" cy="500" rx="80" ry="45" fill="rgb(148,148,148)" opacity="0.7" transform="rotate(0 640 500)"/><ellipse cx="800" cy="470" rx="60" ry="35" fill="rgb(148,148,148)" opacity="0.6" transform="rotate(0 800 470)"/><ellipse cx="600" cy="520" rx="70" ry="40" fill="rgb(145,145,145)" opacity="0.6" transform="rotate(0 600 520)"/><ellipse cx="830" cy="430" rx="55" ry="40" fill="rgb(145,145,145)" opacity="0.6" transform="rotate(0 830 430)"/><ellipse cx="430" cy="440" rx="55" ry="45" fill="rgb(128,128,128)" opacity="0.9" transform="rotate(40 430 440)"/><ellipse cx="395" cy="370" rx="22" ry="50" fill="rgb(133,133,133)" opacity="0.7" transform="rotate(0 395 370)"/><ellipse cx="512" cy="335" rx="30" ry="85" fill="rgb(143,143,143)" opacity="0.85" transform="rotate(0 512 335)"/><ellipse cx="512" cy="410" rx="24" ry="16" fill="rgb(128,128,128)" opacity="0.9" transform="rotate(0 512 410)"/><ellipse cx="500" cy="255" rx="25" ry="18" fill="rgb(148,148,148)" opacity="0.6" transform="rotate(0 500 255)"/></g><g filter="url(#b6)"><ellipse cx="700" cy="158" rx="160" ry="22" fill="rgb(185,185,185)" opacity="0.45" transform="rotate(0 700 158)"/><ellipse cx="575" cy="190" rx="22" ry="48" fill="rgb(195,195,195)" opacity="0.75" transform="rotate(0 575 190)"/><ellipse cx="680" cy="175" rx="18" ry="30" fill="rgb(185,185,185)" opacity="0.7" transform="rotate(0 680 175)"/><ellipse cx="752" cy="195" rx="14" ry="45" fill="rgb(185,185,185)" opacity="0.7" transform="rotate(0 752 195)"/><ellipse cx="590" cy="195" rx="42" ry="40" fill="rgb(185,185,185)" opacity="0.7" transform="rotate(0 590 195)"/><ellipse cx="700" cy="185" rx="35" ry="25" fill="rgb(185,185,185)" opacity="0.5" transform="rotate(0 700 185)"/><ellipse cx="835" cy="225" rx="42" ry="58" fill="rgb(185,185,185)" opacity="0.8" transform="rotate(0 835 225)"/><ellipse cx="845" cy="300" rx="40" ry="40" fill="rgb(185,185,185)" opacity="0.7" transform="rotate(0 845 300)"/><ellipse cx="815" cy="355" rx="55" ry="28" fill="rgb(185,185,185)" opacity="0.65" transform="rotate(0 815 355)"/><ellipse cx="695" cy="285" rx="22" ry="24" fill="rgb(185,185,185)" opacity="0.75" transform="rotate(0 695 285)"/><ellipse cx="660" cy="235" rx="30" ry="14" fill="rgb(185,185,185)" opacity="0.5" transform="rotate(0 660 235)"/><ellipse cx="765" cy="205" rx="22" ry="28" fill="rgb(185,185,185)" opacity="0.5" transform="rotate(0 765 205)"/><ellipse cx="672" cy="405" rx="28" ry="32" fill="rgb(185,185,185)" opacity="0.4" transform="rotate(0 672 405)"/><ellipse cx="706" cy="360" rx="14" ry="13" fill="rgb(195,195,195)" opacity="0.8" transform="rotate(0 706 360)"/><ellipse cx="560" cy="280" rx="30" ry="30" fill="rgb(185,185,185)" opacity="0.3" transform="rotate(0 560 280)"/></g><g filter="url(#b3)"><path d="M420 250 Q398 280 400 320 Q402 360 418 395" fill="none" stroke="rgb(185,185,185)" stroke-width="11" opacity="0.8" stroke-linecap="round" stroke-linejoin="round"/><path d="M432 300 Q420 340 428 375 Q440 400 455 405" fill="none" stroke="rgb(195,195,195)" stroke-width="12" opacity="0.75" stroke-linecap="round" stroke-linejoin="round"/><ellipse cx="462" cy="335" rx="17" ry="32" fill="rgb(195,195,195)" opacity="0.75" transform="rotate(0 462 335)"/><path d="M455 240 Q490 245 510 270" fill="none" stroke="rgb(185,185,185)" stroke-width="10" opacity="0.5" stroke-linecap="round" stroke-linejoin="round"/></g><g filter="url(#b3)"><path d="M604 240 Q598 212 627 200 Q660 192 702 212 Q742 236 765 268 Q772 285 762 298" fill="none" stroke="rgb(112,112,112)" stroke-width="12" opacity="0.95" stroke-linecap="round" stroke-linejoin="round"/><ellipse cx="607" cy="233" rx="13" ry="11" fill="rgb(115,115,115)" opacity="0.95" transform="rotate(0 607 233)"/><path d="M745 245 Q766 266 766 290" fill="none" stroke="rgb(115,115,115)" stroke-width="16" opacity="0.7" stroke-linecap="round" stroke-linejoin="round"/><path d="M627 262 Q632 222 668 215 Q710 222 727 255 Q735 285 720 308 Q700 318 680 312" fill="none" stroke="rgb(120,120,120)" stroke-width="7" opacity="0.9" stroke-linecap="round" stroke-linejoin="round"/><path d="M762 296 Q740 315 712 322 Q690 330 680 340" fill="none" stroke="rgb(110,110,110)" stroke-width="12" opacity="0.85" stroke-linecap="round" stroke-linejoin="round"/><ellipse cx="690" cy="342" rx="17" ry="11" fill="rgb(112,112,112)" opacity="0.75" transform="rotate(0 690 342)"/><path d="M710 321 Q680 335 664 357 Q641 381 617 400 Q594 418 587 441 Q590 462 604 471 Q630 486 660 475 Q692 452 716 422 Q731 394 733 359" fill="none" stroke="rgb(97,97,97)" stroke-width="14" opacity="0.95" stroke-linecap="round" stroke-linejoin="round"/><path d="M607 450 Q626 465 654 460 Q682 440 701 407 Q707 380 697 358" fill="none" stroke="rgb(115,115,115)" stroke-width="7" opacity="0.85" stroke-linecap="round" stroke-linejoin="round"/><path d="M431 257 Q411 290 411 320 Q410 350 414 371 Q425 400 443 414 Q462 430 483 440" fill="none" stroke="rgb(105,105,105)" stroke-width="9" opacity="0.9" stroke-linecap="round" stroke-linejoin="round"/><path d="M454 277 Q438 305 437 334 Q438 360 446 380 Q458 398 474 406" fill="none" stroke="rgb(112,112,112)" stroke-width="7" opacity="0.85" stroke-linecap="round" stroke-linejoin="round"/><ellipse cx="477" cy="330" rx="8" ry="19" fill="rgb(115,115,115)" opacity="0.8" transform="rotate(0 477 330)"/><path d="M388 283 Q377 312 377 340 Q378 370 383 391 Q395 425 417 449 Q433 467 454 477" fill="none" stroke="rgb(115,115,115)" stroke-width="12" opacity="0.75" stroke-linecap="round" stroke-linejoin="round"/><path d="M497 245 Q530 280 535 330 Q530 385 505 425" fill="none" stroke="rgb(117,117,117)" stroke-width="5" opacity="0.35" stroke-linecap="round" stroke-linejoin="round"/></g><rect x="340" y="110" width="580" height="470" fill="url(#npat)"/><path d="M531 242 L541 252 L551 261" fill="none" stroke="rgb(26,26,26)" stroke-width="3.5" opacity="1" stroke-linecap="round" stroke-linejoin="round"/><path d="M517 438 L528 425 L539 411 L547 415" fill="none" stroke="rgb(26,26,26)" stroke-width="4" opacity="1" stroke-linecap="round" stroke-linejoin="round"/><path d="M539 411 L539 406" fill="none" stroke="rgb(38,38,38)" stroke-width="2.5" opacity="1" stroke-linecap="round" stroke-linejoin="round"/><path d="M490 234 L483 246 L479 254" fill="none" stroke="rgb(64,64,64)" stroke-width="2.5" opacity="0.9" stroke-linecap="round" stroke-linejoin="round"/><path d="M497 434 L512 436" fill="none" stroke="rgb(26,26,26)" stroke-width="5" opacity="1" stroke-linecap="round" stroke-linejoin="round"/><path d="M480 402 L489 420 L494 430" fill="none" stroke="rgb(97,97,97)" stroke-width="2.5" opacity="0.5" stroke-linecap="round" stroke-linejoin="round"/><g filter="url(#b1)"><ellipse cx="632" cy="333" rx="22" ry="13" fill="rgb(107,107,107)" opacity="0.5"/></g><path d="M617 331 L626 326 L640 327 L649 333 L645 339 L632 341 L624 337 Z" fill="rgb(28,28,28)"/><path d="M625 328 L628.5 314 L632 328 Z" fill="rgb(38,38,38)"/><path d="M624 337 L626 352 L631 338 Z" fill="rgb(38,38,38)"/><path d="M620 328 L613 331 L620 334 Z" fill="rgb(51,51,51)"/><ellipse cx="741" cy="329" rx="5" ry="2" fill="rgb(46,46,46)" opacity="0.9" transform="rotate(0 741 329)"/><path d="M849 469 L853 455 L857 468 Z" fill="rgb(31,31,31)"/><g filter="url(#b1)"><path d="M527.0 192.7 L531.0 176.0 L539.0 159.6 L558.0 145.5 L577.0 134.8 L598.0 130.0 L640.0 126.5 L675.5 126.0 L711.0 130.0 L741.7 133.6 L752.3 131.3 L763.0 140.7 L781.9 149.0 L817.3 165.6 L831.5 164.0 L834.0 173.8 L852.8 188.0 L874.0 209.3 L891.8 241.2 L895.4 266.0 L900.0 276.7 L894.2 296.8 L886.0 299.2 L864.6 324.0 L876.5 328.7 L886.0 341.7 L890.6 354.2 L895.4 363.6 L896.6 387.3 L893.0 390.8 L897.7 395.6 L893.0 408.6 L890.6 432.2 L876.5 451.1 L867.0 463.0 L855.2 466.5 L848.0 468.9 L833.9 478.3 L815.0 502.0 L803.2 506.7 L786.6 511.4 L758.2 526.8 L739.3 533.9 L711.0 544.5 L680.2 554.0 L670.7 561.1 L654.2 564.6 L621.9 559.9 L586.4 554.0 L562.8 546.9 L539.0 526.8 L527.3 506.7 L536.8 491.3 L538.0 481.8 L529.7 483.0 L520.2 481.8 L519.0 446.4 L513.0 442.8 L507.2 446.4 L503.7 477.0 L491.8 486.6 L484.8 497.2 L461.0 499.6 L430.4 484.2 L404.4 441.7 L400.8 431.0 L392.6 422.7 L371.3 387.3 L363.7 373.0 L365.4 350.6 L373.6 339.0 L365.4 326.3 L367.7 319.0 L385.5 299.0 L386.6 283.8 L404.4 256.6 L418.6 242.4 L439.8 231.7 L468.0 227.0 L491.8 229.4 L503.7 237.7 L531.0 242.4 L527.8 223.5 Z" fill="none" stroke="rgb(18,18,18)" stroke-width="5"/><path d="M752.3 131.3 L763.0 140.7 L781.9 149.0 L817.3 165.6 L831.5 164.0 L834.0 173.8 L852.8 188.0 L874.0 209.3 L891.8 241.2 L895.4 266.0 L900.0 276.7 L894.2 296.8 L886.0 299.2 L864.6 324.0 L876.5 328.7 L886.0 341.7 L890.6 354.2 L895.4 363.6 L896.6 387.3 L893.0 390.8 L897.7 395.6 L893.0 408.6 L890.6 432.2 L876.5 451.1 L867.0 463.0 L855.2 466.5 L848.0 468.9 L833.9 478.3 L815.0 502.0 L803.2 506.7 L786.6 511.4 L758.2 526.8 L739.3 533.9 L711.0 544.5 L680.2 554.0 L670.7 561.1 L654.2 564.6 L621.9 559.9" fill="none" stroke="rgb(18,18,18)" stroke-width="11" stroke-linejoin="round"/><path d="M621.9 559.9 L586.4 554.0 L562.8 546.9 L539.0 526.8 L527.3 506.7 L536.8 491.3 L538.0 481.8" fill="none" stroke="rgb(18,18,18)" stroke-width="8" stroke-linejoin="round"/><path d="M529.7 483.0 L520.2 481.8 L519.0 446.4 L513.0 442.8 L507.2 446.4 L503.7 477.0 L491.8 486.6" fill="none" stroke="rgb(18,18,18)" stroke-width="10" stroke-linejoin="round"/><path d="M491.8 486.6 L484.8 497.2 L461.0 499.6 L430.4 484.2 L404.4 441.7 L400.8 431.0 L392.6 422.7 L371.3 387.3 L363.7 373.0 L365.4 350.6 L373.6 339.0 L365.4 326.3 L367.7 319.0 L385.5 299.0 L386.6 283.8 L404.4 256.6 L418.6 242.4" fill="none" stroke="rgb(18,18,18)" stroke-width="8" stroke-linejoin="round"/><path d="M418.6 242.4 L439.8 231.7 L468.0 227.0 L491.8 229.4 L503.7 237.7 L531.0 242.4" fill="none" stroke="rgb(18,18,18)" stroke-width="10" stroke-linejoin="round"/><path d="M866 324 L848 323 L836 325" fill="none" stroke="rgb(40,40,40)" stroke-width="2.5"/></g></g></g><path d="M527.0 192.7 L531.0 176.0 L539.0 159.6 L558.0 145.5 L577.0 134.8 L598.0 130.0 L640.0 126.5 L675.5 126.0 L711.0 130.0 L741.7 133.6 L752.3 131.3 L763.0 140.7 L781.9 149.0 L817.3 165.6 L831.5 164.0 L834.0 173.8 L852.8 188.0 L874.0 209.3 L891.8 241.2 L895.4 266.0 L900.0 276.7 L894.2 296.8 L886.0 299.2 L864.6 324.0 L876.5 328.7 L886.0 341.7 L890.6 354.2 L895.4 363.6 L896.6 387.3 L893.0 390.8 L897.7 395.6 L893.0 408.6 L890.6 432.2 L876.5 451.1 L867.0 463.0 L855.2 466.5 L848.0 468.9 L833.9 478.3 L815.0 502.0 L803.2 506.7 L786.6 511.4 L758.2 526.8 L739.3 533.9 L711.0 544.5 L680.2 554.0 L670.7 561.1 L654.2 564.6 L621.9 559.9 L586.4 554.0 L562.8 546.9 L539.0 526.8 L527.3 506.7 L536.8 491.3 L538.0 481.8 L529.7 483.0 L520.2 481.8 L519.0 446.4 L513.0 442.8 L507.2 446.4 L503.7 477.0 L491.8 486.6 L484.8 497.2 L461.0 499.6 L430.4 484.2 L404.4 441.7 L400.8 431.0 L392.6 422.7 L371.3 387.3 L363.7 373.0 L365.4 350.6 L373.6 339.0 L365.4 326.3 L367.7 319.0 L385.5 299.0 L386.6 283.8 L404.4 256.6 L418.6 242.4 L439.8 231.7 L468.0 227.0 L491.8 229.4 L503.7 237.7 L531.0 242.4 L527.8 223.5 Z" fill="none" stroke="#ff1010" stroke-width="1.6"/></svg>
<div class="a" style="left:0px;top:719px;width:990px;height:296px;background:#fff;"></div>
<div class="a" style="left:990px;top:683px;width:5px;height:332px;background:#f0f0f0;"></div>
<svg style="left:0;top:0" width="990" height="1015" viewBox="0 0 990 1015"><rect x="59" y="723" width="2" height="263" fill="#6e6e6e"/><rect x="54" y="982.5" width="6" height="2" fill="#6e6e6e"/><rect x="54" y="955.5" width="6" height="2" fill="#6e6e6e"/><rect x="54" y="928.4" width="6" height="2" fill="#6e6e6e"/><rect x="54" y="901.4" width="6" height="2" fill="#6e6e6e"/><rect x="54" y="874.3" width="6" height="2" fill="#6e6e6e"/><rect x="54" y="847.2" width="6" height="2" fill="#6e6e6e"/><rect x="54" y="820.2" width="6" height="2" fill="#6e6e6e"/><rect x="54" y="793.1" width="6" height="2" fill="#6e6e6e"/><rect x="54" y="766.1" width="6" height="2" fill="#6e6e6e"/><rect x="54" y="739.0" width="6" height="2" fill="#6e6e6e"/></svg>
<div class="t" style="left:43.90px;top:981.39px;font-size:11px;">0</div>
<div class="t" style="left:31.70px;top:954.34px;font-size:11px;">500</div>
<div class="t" style="left:25.60px;top:927.29px;font-size:11px;">1000</div>
<div class="t" style="left:25.60px;top:900.24px;font-size:11px;">1500</div>
<div class="t" style="left:25.60px;top:873.19px;font-size:11px;">2000</div>
<div class="t" style="left:25.60px;top:846.14px;font-size:11px;">2500</div>
<div class="t" style="left:25.60px;top:819.09px;font-size:11px;">3000</div>
<div class="t" style="left:25.60px;top:792.04px;font-size:11px;">3500</div>
<div class="t" style="left:25.60px;top:764.99px;font-size:11px;">4000</div>
<div class="t" style="left:25.60px;top:737.94px;font-size:11px;">4500</div>
<svg style="left:0;top:0" width="990" height="1015" viewBox="0 0 990 1015"><rect x="135.7" y="985" width="2" height="6" fill="#6e6e6e"/><rect x="290.9" y="985" width="2" height="6" fill="#6e6e6e"/><rect x="446.1" y="985" width="2" height="6" fill="#6e6e6e"/><rect x="601.3" y="985" width="2" height="6" fill="#6e6e6e"/><rect x="756.5" y="985" width="2" height="6" fill="#6e6e6e"/><rect x="911.7" y="985" width="2" height="6" fill="#6e6e6e"/><rect x="60" y="983" width="930" height="2" fill="#f00"/><rect x="289" y="723" width="1.3" height="253" fill="#3fe03f"/><rect x="91.5" y="959" width="2" height="25" fill="#f00"/><rect x="114.8" y="923" width="2" height="61" fill="#f00"/><rect x="116.0" y="977" width="2" height="7" fill="#f00"/><rect x="120.5" y="980" width="2" height="4" fill="#f00"/><rect x="143.0" y="959" width="2" height="25" fill="#f00"/><rect x="145.0" y="981" width="2" height="3" fill="#f00"/><rect x="175.0" y="976" width="2" height="8" fill="#f00"/><rect x="186.0" y="974" width="2" height="10" fill="#f00"/><rect x="190.0" y="980" width="2" height="4" fill="#f00"/><rect x="209.0" y="978" width="2" height="6" fill="#f00"/><rect x="234.0" y="964" width="2" height="20" fill="#f00"/><rect x="236.0" y="980" width="2" height="4" fill="#f00"/><rect x="261.5" y="898" width="2" height="86" fill="#f00"/><rect x="263.0" y="976" width="2" height="8" fill="#f00"/><rect x="267.0" y="723" width="2" height="261" fill="#f00"/><rect x="268.7" y="961" width="2" height="23" fill="#f00"/><rect x="270.0" y="978" width="2" height="6" fill="#f00"/><rect x="288.5" y="976" width="2" height="8" fill="#f00"/><rect x="300.6" y="978" width="2" height="6" fill="#f00"/><rect x="325.0" y="981" width="2" height="3" fill="#f00"/><rect x="328.0" y="980" width="2" height="4" fill="#f00"/><rect x="358.0" y="981" width="2" height="3" fill="#f00"/><rect x="382.0" y="981" width="2" height="3" fill="#f00"/><path d="M121.8 985.5 L116.8 991 L126.8 991 Z M121.8 985.5 L121.8 991" fill="none" stroke="#3a3aff" stroke-width="1.3"/><path d="M144.0 985.5 L139.0 991 L149.0 991 Z M144.0 985.5 L144.0 991" fill="none" stroke="#3a3aff" stroke-width="1.3"/><path d="M165.0 985.5 L160.0 991 L170.0 991 Z M165.0 985.5 L165.0 991" fill="none" stroke="#3a3aff" stroke-width="1.3"/><path d="M168.0 985.5 L163.0 991 L173.0 991 Z M168.0 985.5 L168.0 991" fill="none" stroke="#3a3aff" stroke-width="1.3"/><path d="M177.4 985.5 L172.4 991 L182.4 991 Z M177.4 985.5 L177.4 991" fill="none" stroke="#3a3aff" stroke-width="1.3"/><path d="M185.7 985.5 L180.7 991 L190.7 991 Z M185.7 985.5 L185.7 991" fill="none" stroke="#3a3aff" stroke-width="1.3"/><path d="M188.6 985.5 L183.6 991 L193.6 991 Z M188.6 985.5 L188.6 991" fill="none" stroke="#3a3aff" stroke-width="1.3"/><path d="M208.7 985.5 L203.7 991 L213.7 991 Z M208.7 985.5 L208.7 991" fill="none" stroke="#3a3aff" stroke-width="1.3"/><path d="M211.4 985.5 L206.4 991 L216.4 991 Z M211.4 985.5 L211.4 991" fill="none" stroke="#3a3aff" stroke-width="1.3"/><path d="M220.0 985.5 L215.0 991 L225.0 991 Z M220.0 985.5 L220.0 991" fill="none" stroke="#3a3aff" stroke-width="1.3"/><path d="M223.0 985.5 L218.0 991 L228.0 991 Z M223.0 985.5 L223.0 991" fill="none" stroke="#3a3aff" stroke-width="1.3"/><path d="M253.7 985.5 L248.7 991 L258.7 991 Z M253.7 985.5 L253.7 991" fill="none" stroke="#3a3aff" stroke-width="1.3"/><path d="M264.0 985.5 L259.0 991 L269.0 991 Z M264.0 985.5 L264.0 991" fill="none" stroke="#3a3aff" stroke-width="1.3"/><path d="M267.6 985.5 L262.6 991 L272.6 991 Z M267.6 985.5 L267.6 991" fill="none" stroke="#3a3aff" stroke-width="1.3"/><path d="M289.2 985.5 L284.2 991 L294.2 991 Z M289.2 985.5 L289.2 991" fill="none" stroke="#3a3aff" stroke-width="1.3"/><path d="M358.6 985.5 L353.6 991 L363.6 991 Z M358.6 985.5 L358.6 991" fill="none" stroke="#3a3aff" stroke-width="1.3"/><path d="M233.6 985.5 L228.6 991 L238.6 991 Z M233.6 985.5 L233.6 991" fill="none" stroke="#ff4a4a" stroke-width="1.3"/></svg>
<div class="t" style="left:127.70px;top:996.69px;font-size:11px;">100</div>
<div class="t" style="left:282.90px;top:996.69px;font-size:11px;">200</div>
<div class="t" style="left:438.10px;top:996.69px;font-size:11px;">300</div>
<div class="t" style="left:593.30px;top:996.69px;font-size:11px;">400</div>
<div class="t" style="left:748.50px;top:996.69px;font-size:11px;">500</div>
<div class="t" style="left:903.70px;top:996.69px;font-size:11px;">600</div>
<div class="t" style="left:516.00px;top:1005.69px;font-size:11px;font-weight:bold;">m/z</div>
<div class="t" style="left:-35px;top:852px;width:90px;text-align:center;font-size:11px;font-weight:bold;transform:rotate(-90deg)">Absolute Intensity</div>
<div class="a" style="left:1188px;top:48px;width:730px;height:1px;background:#8c8c8c;"></div>
<div class="tab" style="left:1080px;top:25px;width:61px;height:24px;border-bottom:1px solid #8c8c8c"></div>
<div class="tab" style="left:1140px;top:25px;width:49px;height:24px;border-bottom:1px solid #8c8c8c"></div>
<div class="tab tabsel" style="left:995px;top:23px;width:86px;height:26px"></div>
<div class="t" style="left:1005.40px;top:30.84px;font-size:12px;">Visualization</div>
<div class="t" style="left:1091.00px;top:31.34px;font-size:12px;">Objects</div>
<div class="t" style="left:1151.40px;top:31.34px;font-size:12px;">Tasks</div>
<div class="a" style="left:995px;top:48px;width:1px;height:967px;background:#8c8c8c;"></div>
<svg style="left:1009px;top:64px;" width="8" height="14" viewBox="0 0 8 14"><path d="M1 1 L6.5 6.5 L1 12 Z" fill="none" stroke="#666" stroke-width="1.4"/></svg>
<svg style="left:1024px;top:63px;" width="13" height="16" viewBox="0 0 13 16"><path d="M1 1 L8 1 L11.5 4.5 L11.5 14.5 L1 14.5 Z" fill="none" stroke="#555" stroke-width="1.2"/><path d="M3.5 1 L3.5 8 L5 5.5 L6.5 8 L6.5 1" fill="none" stroke="#555" stroke-width="1.1"/></svg>
<div class="t" style="left:1040.00px;top:65.84px;font-size:12px;">Bookmark:</div>
<svg style="left:1110px;top:63px;" width="16" height="17" viewBox="0 0 16 17"><path d="M1 1 L8 1 L11.5 4.5 L11.5 8 M1 1 L1 14 L7 14" fill="none" stroke="#555" stroke-width="1.2"/><path d="M3 1 L3 7 L4.5 5 L6 7 L6 1" fill="none" stroke="#555" stroke-width="1"/><circle cx="11" cy="12" r="3.8" fill="#f0f0f0" stroke="#555" stroke-width="1.2"/><path d="M11 9.8 L11 14.2 M8.8 12 L13.2 12" stroke="#555" stroke-width="1.4"/></svg>
<svg style="left:1136px;top:63px;" width="16" height="16" viewBox="0 0 16 16"><path d="M2 7 L8 2 L14 7 L8 12 Z" fill="none" stroke="#555" stroke-width="1.3"/><path d="M2 10 L8 15 L14 10" fill="none" stroke="#555" stroke-width="1.3"/><path d="M2 1 L15 14" stroke="#555" stroke-width="1.5"/></svg>
<div class="combo" style="left:1157px;top:58px;width:752px;height:26px"></div>
<div class="t" style="left:1161.00px;top:65.34px;font-size:12px;">Select Visualization to load...</div>
<div class="arr" style="left:1893px;top:68px"></div>
<div class="a" style="left:996px;top:93px;width:906px;height:18px;overflow:hidden"><div class="t" style="left:28.00px;top:-8.16px;font-size:12px;"><span style="display:inline-block;width:13px;height:3px;background:#555;vertical-align:baseline"></span></div>
<div class="t" style="left:46.00px;top:-8.16px;font-size:12px;">Spectra:</div>
<div class="t" style="left:124.00px;top:-8.16px;font-size:12px;">Active:</div>
<div class="a" style="left:172px;top:-3px;width:12px;height:6px;background:#0000ff;"></div>
<div class="t" style="left:194.00px;top:-8.16px;font-size:12px;">None</div>
<svg style="left:870px;top:-12px" width="30" height="18" viewBox="0 0 30 18"><circle cx="13" cy="7" r="7" fill="none" stroke="#888" stroke-width="1.1"/></svg><div class="a" style="left:862px;top:0px;width:3px;height:2px;background:#888;"></div>
</div>
<div class="sep" style="left:996px;top:90px;width:922px"></div>
<div class="sep" style="left:996px;top:109px;width:905px"></div>
<div class="sep" style="left:996px;top:148px;width:905px"></div>
<div class="sep" style="left:996px;top:187px;width:905px"></div>
<div class="sep" style="left:996px;top:226px;width:905px"></div>
<div class="sep" style="left:996px;top:265px;width:905px"></div>
<div class="sep" style="left:996px;top:979px;width:905px"></div>
<div class="a" style="left:1902px;top:93px;width:16px;height:922px;background:#f0f0f0;"></div>
<div class="a" style="left:1902px;top:162px;width:15px;height:774px;background:#cdcdcd;"></div>
<svg style="left:1904px;top:97px;" width="12" height="10" viewBox="0 0 12 10"><path d="M2 7 L6 3 L10 7" fill="none" stroke="#555" stroke-width="1.8"/></svg>
<svg style="left:1904px;top:1004px;" width="12" height="10" viewBox="0 0 12 10"><path d="M2 3 L6 7 L10 3" fill="none" stroke="#555" stroke-width="1.8"/></svg>
<svg style="left:1009px;top:122px;" width="8" height="14" viewBox="0 0 8 14"><path d="M1 1 L7 6.5 L1 12 Z" fill="#555"/></svg>
<svg style="left:1022px;top:124px;" width="18" height="10" viewBox="0 0 18 10"><ellipse cx="5.5" cy="5" rx="5" ry="4.5" fill="#555"/><ellipse cx="11.5" cy="4.5" rx="5" ry="4" fill="#555"/></svg>
<div class="t" style="left:1041.00px;top:123.84px;font-size:12px;">Regions: Regions</div>
<svg style="left:1009px;top:161px;" width="8" height="14" viewBox="0 0 8 14"><path d="M1 1 L7 6.5 L1 12 Z" fill="#555"/></svg>
<svg style="left:1023px;top:160px;" width="17" height="17" viewBox="0 0 17 17"><circle cx="8" cy="8" r="7.5" fill="#555"/><path d="M3 4 Q7 3 9 6 Q11 9 15 8 L14 5 Q10 6 8 3 Z" fill="#f0f0f0"/></svg>
<div class="t" style="left:1041.00px;top:163.34px;font-size:12px;">Labels:</div>
<div class="combo" style="left:1157px;top:156px;width:735px;height:24px"></div>
<div class="t" style="left:1164.00px;top:163.34px;font-size:12px;">&lt; None &gt;</div>
<div class="arr" style="left:1876px;top:165px"></div>
<svg style="left:1009px;top:200px;" width="8" height="14" viewBox="0 0 8 14"><path d="M1 1 L7 6.5 L1 12 Z" fill="#555"/></svg>
<svg style="left:1023px;top:199px;" width="17" height="17" viewBox="0 0 17 17"><circle cx="8" cy="8" r="7" fill="#fff" stroke="#666" stroke-width="1.2"/><circle cx="5.5" cy="5.5" r="1.1" fill="#666"/><circle cx="10" cy="5" r="1.1" fill="#666"/><circle cx="5" cy="10" r="1.1" fill="#666"/><circle cx="9" cy="9" r="1.1" fill="#666"/><circle cx="11.5" cy="11" r="1" fill="#666"/></svg>
<div class="t" style="left:1041.00px;top:202.34px;font-size:12px;">Spot Images:</div>
<div class="combo" style="left:1157px;top:195px;width:735px;height:24px"></div>
<div class="t" style="left:1164.00px;top:202.34px;font-size:12px;">&lt; None &gt;</div>
<div class="arr" style="left:1876px;top:204px"></div>
<svg style="left:1009px;top:239px;" width="8" height="14" viewBox="0 0 8 14"><path d="M1 1 L7 6.5 L1 12 Z" fill="#555"/></svg>
<svg style="left:1023px;top:238px;" width="17" height="17" viewBox="0 0 17 17"><rect x="1" y="1" width="5" height="5" fill="none" stroke="#555" stroke-width="1.4"/><path d="M3.5 6 L3.5 11 M6 3.5 L10 3.5" stroke="#555" stroke-width="1.4"/><rect x="3" y="9" width="13" height="7" fill="#555"/><rect x="9" y="3" width="7" height="13" fill="#555"/><rect x="6" y="11" width="2.5" height="2.5" fill="#f0f0f0"/><rect x="11.5" y="11" width="2.5" height="2.5" fill="#f0f0f0"/><rect x="11.5" y="5.5" width="2.5" height="2.5" fill="#f0f0f0"/></svg>
<div class="t" style="left:1041.00px;top:241.34px;font-size:12px;">Component Analysis:</div>
<div class="combo" style="left:1157px;top:234px;width:735px;height:24px"></div>
<div class="t" style="left:1164.00px;top:241.34px;font-size:12px;">&lt; None &gt;</div>
<div class="arr" style="left:1876px;top:243px"></div>
<svg style="left:1007px;top:279px;" width="9" height="9" viewBox="0 0 9 9"><path d="M8.5 0.5 L8.5 8.5 L0.5 8.5 Z" fill="#555"/></svg>
<svg style="left:1023px;top:277px;" width="17" height="17" viewBox="0 0 17 17"><circle cx="8" cy="8" r="7.8" fill="#555"/><rect x="2.5" y="5.1" width="1.6" height="1.6" fill="#fff"/><rect x="2.5" y="7.7" width="1.6" height="1.6" fill="#fff"/><rect x="2.5" y="10.3" width="1.6" height="1.6" fill="#fff"/><rect x="5.1" y="2.5" width="1.6" height="1.6" fill="#fff"/><rect x="5.1" y="5.1" width="1.6" height="1.6" fill="#fff"/><rect x="5.1" y="7.7" width="1.6" height="1.6" fill="#fff"/><rect x="5.1" y="10.3" width="1.6" height="1.6" fill="#fff"/><rect x="5.1" y="12.9" width="1.6" height="1.6" fill="#fff"/><rect x="7.7" y="2.5" width="1.6" height="1.6" fill="#fff"/><rect x="7.7" y="5.1" width="1.6" height="1.6" fill="#fff"/><rect x="7.7" y="7.7" width="1.6" height="1.6" fill="#fff"/><rect x="7.7" y="10.3" width="1.6" height="1.6" fill="#fff"/><rect x="7.7" y="12.9" width="1.6" height="1.6" fill="#fff"/><rect x="10.3" y="2.5" width="1.6" height="1.6" fill="#fff"/><rect x="10.3" y="5.1" width="1.6" height="1.6" fill="#fff"/><rect x="10.3" y="7.7" width="1.6" height="1.6" fill="#fff"/><rect x="10.3" y="10.3" width="1.6" height="1.6" fill="#fff"/><rect x="10.3" y="12.9" width="1.6" height="1.6" fill="#fff"/><rect x="12.9" y="5.1" width="1.6" height="1.6" fill="#fff"/><rect x="12.9" y="7.7" width="1.6" height="1.6" fill="#fff"/><rect x="12.9" y="10.3" width="1.6" height="1.6" fill="#fff"/></svg>
<div class="t" style="left:1041.00px;top:279.84px;font-size:12px;">Ion Images:</div>
<div class="t" style="left:1119.00px;top:279.84px;font-size:12px;">Active:</div>
<div class="a" style="left:1167px;top:279px;width:12px;height:12px;background:#00ee00;"></div>
<div class="t" style="left:1191.00px;top:279.84px;font-size:12px;">198.0849 m/z ± 0.01 Da</div>
<svg style="left:1846px;top:277px;" width="18" height="15" viewBox="0 0 18 15"><path d="M1 2 L11 2 M1 5.5 L11 5.5 M1 9 L8 9" stroke="#999" stroke-width="1.3"/><path d="M13 6 L13 14 M9 10 L17 10" stroke="#999" stroke-width="1.5"/></svg>
<svg style="left:1871px;top:275px;" width="18" height="18" viewBox="0 0 18 18"><circle cx="9" cy="9" r="7.6" fill="none" stroke="#555" stroke-width="1.2"/><path d="M6 6 L12 12 M12 6 L6 12" stroke="#555" stroke-width="2"/></svg>
<div class="a" style="left:996px;top:304px;width:905px;height:1px;background:#a0a0a0;"></div>
<div class="a" style="left:996px;top:305px;width:905px;height:674px;background:#f8f8f8;"></div>
<div class="a" style="left:996px;top:305px;width:905px;height:1px;background:#fff;"></div>
<div class="combo" style="left:1021px;top:314px;width:790px;height:20px;border-color:#8a8a8a"></div>
<div class="t" style="left:1024.00px;top:318.84px;font-size:12px;color:#8f8a8f;">Transparency: 0%</div>
<svg style="left:1819px;top:316px;" width="17" height="17" viewBox="0 0 17 17"><path d="M16 1 L16 16 L1 16 Z" fill="#8a8a8a" stroke="#6a6a6a" stroke-width="1"/></svg>
<svg style="left:1839px;top:318px" width="29" height="13" viewBox="0 0 29 13"><defs><linearGradient id="jet2" x1="0" x2="1" y1="0" y2="0"><stop offset="0" stop-color="#00008f"/><stop offset="0.12" stop-color="#0000ff"/><stop offset="0.37" stop-color="#00ffff"/><stop offset="0.62" stop-color="#ffff00"/><stop offset="0.87" stop-color="#ff0000"/><stop offset="1" stop-color="#800000"/></linearGradient></defs><rect x="0.5" y="0.5" width="28" height="12" fill="url(#jet2)" stroke="#666" stroke-width="1"/></svg>
<svg style="left:1872px;top:316px;" width="17" height="17" viewBox="0 0 17 17"><circle cx="8.5" cy="5" r="4.5" fill="#1aa89a"/><circle cx="4.5" cy="11" r="4.5" fill="#1b9bd1"/><circle cx="12" cy="11" r="4.5" fill="#e53935"/><circle cx="8.2" cy="9" r="2.4" fill="#fff"/><path d="M6 12 Q8 15 10 12" fill="#f57c00"/></svg>
<div class="t" style="left:1021.00px;top:344.84px;font-size:12px;">Sort by:</div>
<div class="combo" style="left:1069px;top:338px;width:792px;height:22px"></div>
<div class="t" style="left:1075.00px;top:343.84px;font-size:12px;">m/z</div>
<div class="arr" style="left:1845px;top:346px"></div>
<svg style="left:1872px;top:341px;" width="17" height="16" viewBox="0 0 17 16"><path d="M3.5 1 L3.5 14" stroke="#555" stroke-width="1.6"/><path d="M0.5 11 L3.5 15 L6.5 11 Z" fill="#555"/><path d="M7 2.5 L16 2.5 M7 7.5 L13 7.5 M7 12.5 L10 12.5" stroke="#555" stroke-width="1.8"/></svg>
<div class="a" style="left:1021px;top:365px;width:871px;height:576px;background:#fff;border:1px solid #828282"></div>
<div class="a" style="left:1061px;top:374px;width:12px;height:12px;background:#6a2fc4;"></div>
<div class="t" style="left:1085.00px;top:375.18px;font-size:11.6px;">90.055 m/z ± 0.01 Da</div>
<div class="a" style="left:1022px;top:396px;width:869px;height:30px;background:#f5f5f5;"></div>
<div class="a" style="left:1061px;top:404px;width:12px;height:12px;background:#ffd800;"></div>
<div class="t" style="left:1085.00px;top:405.18px;font-size:11.6px;">104.0706 m/z ± 0.01 Da</div>
<div class="a" style="left:1061px;top:434px;width:12px;height:12px;background:#ff7f00;"></div>
<div class="t" style="left:1085.00px;top:435.18px;font-size:11.6px;">118.0854 m/z ± 0.01 Da</div>
<div class="a" style="left:1022px;top:456px;width:869px;height:30px;background:#f5f5f5;"></div>
<div class="a" style="left:1061px;top:464px;width:12px;height:12px;background:#999999;"></div>
<div class="t" style="left:1085.00px;top:465.18px;font-size:11.6px;">120.0694 m/z ± 0.0142 Da</div>
<div class="a" style="left:1061px;top:494px;width:12px;height:12px;background:#cc2f8c;"></div>
<div class="t" style="left:1085.00px;top:495.18px;font-size:11.6px;">126.0219 m/z ± 0.01 Da</div>
<div class="a" style="left:1022px;top:516px;width:869px;height:30px;background:#f5f5f5;"></div>
<div class="a" style="left:1061px;top:524px;width:12px;height:12px;background:#6a2fc4;"></div>
<div class="t" style="left:1085.00px;top:525.18px;font-size:11.6px;">132.093 m/z ± 0.0173 Da</div>
<div class="a" style="left:1061px;top:554px;width:12px;height:12px;background:#6e8a00;"></div>
<div class="t" style="left:1085.00px;top:555.18px;font-size:11.6px;">133.0972 m/z ± 0.01 Da</div>
<div class="a" style="left:1022px;top:576px;width:869px;height:30px;background:#f5f5f5;"></div>
<div class="a" style="left:1061px;top:584px;width:12px;height:12px;background:#ff7f00;"></div>
<div class="t" style="left:1085.00px;top:585.18px;font-size:11.6px;">147.0764 m/z ± 0.01 Da</div>
<div class="a" style="left:1061px;top:614px;width:12px;height:12px;background:#ffd800;"></div>
<div class="t" style="left:1085.00px;top:615.18px;font-size:11.6px;">147.1128 m/z ± 0.01 Da</div>
<div class="a" style="left:1022px;top:636px;width:869px;height:30px;background:#f5f5f5;"></div>
<div class="a" style="left:1061px;top:644px;width:12px;height:12px;background:#f2648c;"></div>
<div class="t" style="left:1085.00px;top:645.18px;font-size:11.6px;">148.0604 m/z ± 0.01 Da</div>
<div class="a" style="left:1061px;top:674px;width:12px;height:12px;background:#d2b4dc;"></div>
<div class="t" style="left:1085.00px;top:675.18px;font-size:11.6px;">154.0265 m/z ± 0.01 Da</div>
<div class="a" style="left:1022px;top:696px;width:869px;height:30px;background:#f5f5f5;"></div>
<div class="a" style="left:1061px;top:704px;width:12px;height:12px;background:#fcbc78;"></div>
<div class="t" style="left:1085.00px;top:705.18px;font-size:11.6px;">154.0516 m/z ± 0.01 Da</div>
<div class="a" style="left:1061px;top:734px;width:12px;height:12px;background:#f0e18c;"></div>
<div class="t" style="left:1085.00px;top:735.18px;font-size:11.6px;">155.0376 m/z ± 0.01 Da</div>
<div class="a" style="left:1022px;top:756px;width:869px;height:30px;background:#f5f5f5;"></div>
<div class="a" style="left:1061px;top:764px;width:12px;height:12px;background:#0000dc;"></div>
<div class="t" style="left:1085.00px;top:765.18px;font-size:11.6px;">156.0768 m/z ± 0.01 Da</div>
<div class="a" style="left:1061px;top:794px;width:12px;height:12px;background:#f2648c;"></div>
<div class="t" style="left:1085.00px;top:795.18px;font-size:11.6px;">175.119 m/z ± 0.01 Da</div>
<div class="a" style="left:1022px;top:816px;width:869px;height:30px;background:#f5f5f5;"></div>
<div class="a" style="left:1061px;top:824px;width:12px;height:12px;background:#fcbc78;"></div>
<div class="t" style="left:1085.00px;top:825.18px;font-size:11.6px;">182.0812 m/z ± 0.01 Da</div>
<div class="a" style="left:1061px;top:854px;width:12px;height:12px;background:#2e9a2e;"></div>
<div class="t" style="left:1085.00px;top:855.18px;font-size:11.6px;">184.0944 m/z ± 0.01 Da</div>
<div class="a" style="left:1022px;top:876px;width:869px;height:30px;background:#cce8fc;"></div>
<div class="a" style="left:1061px;top:884px;width:12px;height:12px;background:#00e600;"></div>
<div class="t" style="left:1085.00px;top:885.18px;font-size:11.6px;">198.0849 m/z ± 0.01 Da</div>
<div class="a" style="left:1061px;top:914px;width:12px;height:12px;background:#00e600;"></div>
<div class="t" style="left:1085.00px;top:915.18px;font-size:11.6px;">243.0436 m/z ± 0.02 Da</div>
<svg style="left:1030px;top:884px;" width="16" height="12" viewBox="0 0 16 12"><path d="M1 6 Q8 -2 15 6 Q8 14 1 6 Z" fill="#555"/><circle cx="8" cy="6" r="2.6" fill="#cce8fc"/><circle cx="8" cy="6" r="1.4" fill="#555"/></svg>
<svg style="left:1024px;top:945px;" width="16" height="13" viewBox="0 0 16 13"><path d="M1 6.5 Q8 -1.5 15 6.5 Q8 14.5 1 6.5 Z" fill="#999"/><circle cx="8" cy="6.5" r="2.8" fill="#f8f8f8"/><circle cx="8" cy="6.5" r="1.5" fill="#999"/></svg>
<svg style="left:1049px;top:944px;" width="16" height="15" viewBox="0 0 16 15"><path d="M1 7 Q8 -1 15 7 Q8 15 1 7 Z" fill="none" stroke="#aaa" stroke-width="1.2"/><circle cx="8" cy="7" r="2.2" fill="none" stroke="#aaa" stroke-width="1.1"/><path d="M2 1 L14 14" stroke="#aaa" stroke-width="1.3"/></svg>
<div class="a" style="left:1076px;top:950px;width:12px;height:4px;background:#555;"></div>
<svg style="left:1099px;top:944px;" width="16" height="15" viewBox="0 0 16 15"><path d="M1.5 5 L1.5 13.5 L10 13.5" fill="none" stroke="#555" stroke-width="1.3"/><rect x="4" y="2.5" width="11" height="9" rx="1" fill="#555"/><path d="M6.5 2.5 L7.5 0.8 L11.5 0.8 L12.5 2.5" fill="#555"/><circle cx="9.5" cy="7" r="2" fill="#f8f8f8"/><circle cx="9.5" cy="7" r="1" fill="#555"/></svg>
<svg style="left:1124px;top:943px;" width="16" height="17" viewBox="0 0 16 17"><path d="M1 8 L6 2 L9 6" fill="none" stroke="#555" stroke-width="1.3"/><path d="M1 8 L6 2 L6 8 Z" fill="#555"/><circle cx="10.5" cy="11" r="4.5" fill="#f8f8f8" stroke="#555" stroke-width="1.4"/><path d="M10.5 8.5 L10.5 13.5 M8 11 L13 11" stroke="#555" stroke-width="1.5"/></svg>
<svg style="left:1149px;top:944px;" width="16" height="16" viewBox="0 0 16 16"><g transform="translate(8 8)"><circle r="5.5" fill="#555"/><rect x="-1.6" y="-7.5" width="3.2" height="4" fill="#555" transform="rotate(0)"/><rect x="-1.6" y="-7.5" width="3.2" height="4" fill="#555" transform="rotate(45)"/><rect x="-1.6" y="-7.5" width="3.2" height="4" fill="#555" transform="rotate(90)"/><rect x="-1.6" y="-7.5" width="3.2" height="4" fill="#555" transform="rotate(135)"/><rect x="-1.6" y="-7.5" width="3.2" height="4" fill="#555" transform="rotate(180)"/><rect x="-1.6" y="-7.5" width="3.2" height="4" fill="#555" transform="rotate(225)"/><rect x="-1.6" y="-7.5" width="3.2" height="4" fill="#555" transform="rotate(270)"/><rect x="-1.6" y="-7.5" width="3.2" height="4" fill="#555" transform="rotate(315)"/><circle r="2.2" fill="#f8f8f8"/></g></svg>
<svg style="left:1175px;top:945px;" width="14" height="14" viewBox="0 0 14 14"><path d="M2 2 L12 12 M12 2 L2 12" stroke="#555" stroke-width="3"/></svg>
<div class="a" style="left:1430px;top:974px;width:36px;height:1px;border-top:1px dotted #777"></div>
<svg style="left:1007px;top:993px;" width="9" height="9" viewBox="0 0 9 9"><path d="M8.5 0.5 L8.5 8.5 L0.5 8.5 Z" fill="#555"/></svg>
<svg style="left:1023px;top:993px;" width="16" height="10" viewBox="0 0 16 10"><path d="M0 9.5 L8 0.5 L16 9.5 Z" fill="#555"/></svg>
<div class="t" style="left:1041.00px;top:993.34px;font-size:12px;">Feature list:</div>
<div class="combo" style="left:1157px;top:986px;width:735px;height:26px"></div>
<div class="t" style="left:1161.00px;top:993.84px;font-size:12px;">06</div>
<div class="arr" style="left:1876px;top:996px"></div>

</body></html>
